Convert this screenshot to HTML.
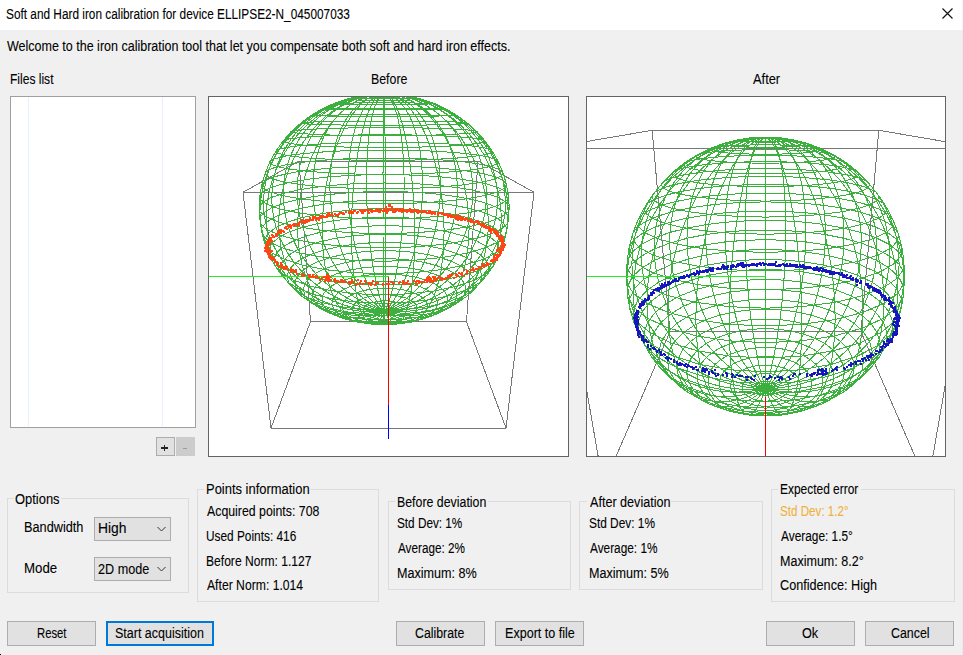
<!DOCTYPE html>
<html><head><meta charset="utf-8">
<style>
html,body{margin:0;padding:0;}
body{width:963px;height:655px;overflow:hidden;background:#f0f0f0;position:relative;font-family:"Liberation Sans",sans-serif;font-size:12px;color:#000;}
.t{position:absolute;white-space:nowrap;line-height:15px;font-size:14px;transform-origin:0 0;-webkit-text-stroke:0.1px currentColor;}
.abs{position:absolute;box-sizing:border-box;}
#titlebar{left:0;top:0;width:963px;height:30px;background:#fff;}
.close{left:942px;top:8px;width:11px;height:11px;}
.listbox{left:10px;top:96px;width:186px;height:332px;background:#fff;border:1px solid #a0a0a0;}
.group{border:1px solid #dcdcdc;}
.combo{background:#e1e1e1;border:1px solid #adadad;}
.btn{background:#e1e1e1;border:1px solid #adadad;}
</style></head><body>
<div id="titlebar" class="abs"></div>
<svg class="abs close" viewBox="0 0 11 11" width="11" height="11" style="position:absolute"><path d="M0.5 0.5L10.5 10.5M10.5 0.5L0.5 10.5" stroke="#111" stroke-width="1.15" fill="none"/></svg>
<div class="abs listbox"></div>
<div class="abs" style="left:28px;top:97px;width:1px;height:329px;background:#e8f0fb"></div>
<div class="abs" style="left:162px;top:97px;width:1px;height:329px;background:#e8f0fb"></div>
<div class="abs btn" style="left:156px;top:437px;width:19px;height:19px;"></div>
<div class="abs" style="left:176px;top:437px;width:19px;height:19px;background:#cccccc"></div>
<div class="abs" style="left:161px;top:447px;width:7px;height:2px;background:#222"></div>
<div class="abs" style="left:164px;top:445px;width:1px;height:6px;background:#222"></div>
<div class="abs" style="left:183px;top:448px;width:4px;height:1px;background:#9a9aa6"></div>
<svg width="361" height="361" viewBox="0 0 361 361" style="position:absolute;left:208px;top:96px" shape-rendering="crispEdges">
<defs><clipPath id="cp1"><rect x="1" y="1" width="359" height="359"/></clipPath></defs>
<rect x="0.5" y="0.5" width="360" height="360" fill="#fff" stroke="#646464"/>
<g clip-path="url(#cp1)" fill="none" stroke-width="1">
<path stroke="#787878" d="M102.5 225.7 L63.0 332.1 M102.5 225.7 L91.0 65.0 M102.5 225.7 L258.5 225.7 M63.0 332.1 L35.0 96.3 M63.0 332.1 L298.0 332.1 M91.0 65.0 L35.0 96.3 M91.0 65.0 L270.0 65.0 M35.0 96.3 L326.0 96.3 M258.5 225.7 L298.0 332.1 M258.5 225.7 L270.0 65.0 M298.0 332.1 L326.0 96.3 M270.0 65.0 L326.0 96.3"/>
<path stroke="#3cb03c" d="M176.7 219.7 L178.9 219.6 L181.0 219.4 L182.9 218.9 L184.6 218.3 L185.9 217.6 L186.9 216.8 L187.5 215.9 L187.7 215.0 L187.4 214.1 L186.8 213.2 L185.8 212.4 L184.4 211.7 L182.8 211.2 L181.0 210.7 L179.0 210.5 L176.9 210.4 L174.8 210.5 L172.8 210.7 L171.0 211.2 L169.3 211.7 L168.0 212.4 L166.9 213.2 L166.3 214.1 L166.0 215.0 L166.1 215.9 L166.7 216.8 L167.6 217.6 L169.0 218.3 L170.6 218.9 L172.5 219.4 L174.6 219.6 L176.7 219.7 M176.6 223.3 L181.1 223.1 L185.3 222.6 L189.2 221.6 L192.5 220.4 L195.2 218.9 L197.1 217.2 L198.2 215.5 L198.4 213.6 L197.9 211.9 L196.5 210.2 L194.4 208.6 L191.7 207.3 L188.5 206.3 L184.9 205.5 L181.0 205.0 L177.0 204.8 L172.9 205.0 L169.0 205.5 L165.4 206.3 L162.1 207.3 L159.4 208.6 L157.3 210.2 L155.9 211.9 L155.2 213.6 L155.4 215.5 L156.4 217.2 L158.3 218.9 L160.9 220.4 L164.2 221.6 L168.0 222.6 L172.2 223.1 L176.6 223.3 M176.5 226.1 L183.3 225.8 L189.7 224.9 L195.6 223.5 L200.6 221.6 L204.5 219.3 L207.3 216.8 L208.8 214.2 L209.0 211.5 L208.0 208.8 L205.9 206.4 L202.7 204.2 L198.7 202.3 L193.9 200.8 L188.6 199.7 L182.9 199.0 L177.1 198.7 L171.2 199.0 L165.4 199.7 L160.1 200.8 L155.3 202.3 L151.2 204.2 L147.9 206.4 L145.7 208.8 L144.6 211.5 L144.7 214.2 L146.1 216.8 L148.8 219.3 L152.7 221.6 L157.6 223.5 L163.4 224.9 L169.8 225.8 L176.5 226.1 M176.4 227.9 L185.6 227.5 L194.3 226.3 L202.1 224.4 L208.7 221.8 L213.9 218.8 L217.4 215.5 L219.3 212.0 L219.4 208.4 L217.9 205.0 L214.9 201.9 L210.7 199.1 L205.3 196.7 L199.0 194.7 L192.1 193.3 L184.7 192.5 L177.1 192.2 L169.5 192.5 L162.1 193.3 L155.1 194.7 L148.7 196.7 L143.3 199.1 L138.9 201.9 L135.8 205.0 L134.2 208.4 L134.2 212.0 L135.9 215.5 L139.3 218.8 L144.4 221.8 L150.9 224.4 L158.7 226.3 L167.3 227.5 L176.4 227.9 M176.3 228.8 L187.9 228.2 L198.9 226.7 L208.7 224.3 L216.9 221.1 L223.2 217.3 L227.5 213.1 L229.5 208.8 L229.4 204.6 L227.4 200.5 L223.6 196.7 L218.2 193.3 L211.5 190.5 L203.8 188.3 L195.4 186.6 L186.4 185.6 L177.2 185.3 L167.9 185.6 L158.9 186.6 L150.4 188.3 L142.6 190.5 L135.8 193.3 L130.3 196.7 L126.4 200.5 L124.2 204.6 L123.9 208.8 L125.8 213.1 L129.8 217.3 L136.0 221.1 L144.1 224.3 L153.9 226.7 L164.8 228.2 L176.3 228.8 M176.2 228.5 L190.2 227.8 L203.5 226.0 L215.3 223.0 L225.0 219.2 L232.4 214.7 L237.2 209.9 L239.4 204.8 L239.1 199.9 L236.4 195.2 L231.7 190.8 L225.2 187.1 L217.3 183.9 L208.3 181.3 L198.4 179.5 L187.9 178.4 L177.2 178.0 L166.5 178.4 L156.0 179.5 L146.0 181.3 L136.9 183.9 L128.8 187.1 L122.2 190.8 L117.3 195.2 L114.5 199.9 L113.9 204.8 L115.9 209.9 L120.5 214.7 L127.7 219.2 L137.4 223.0 L149.0 226.0 L162.2 227.8 L176.2 228.5 M176.1 227.0 L192.5 226.2 L208.0 224.1 L221.7 220.7 L233.0 216.2 L241.4 211.1 L246.7 205.6 L248.9 199.9 L248.2 194.4 L244.9 189.2 L239.3 184.4 L231.8 180.3 L222.7 176.8 L212.4 174.0 L201.2 172.1 L189.4 170.9 L177.3 170.5 L165.1 170.9 L153.3 172.1 L142.0 174.0 L131.5 176.8 L122.3 180.3 L114.6 184.4 L108.8 189.2 L105.3 194.4 L104.4 199.9 L106.4 205.6 L111.4 211.1 L119.6 216.2 L130.7 220.7 L144.3 224.1 L159.7 226.2 L176.1 227.0 M176.0 224.2 L194.8 223.3 L212.5 220.9 L228.1 217.1 L240.7 212.1 L250.0 206.4 L255.7 200.3 L257.9 194.1 L256.9 188.1 L252.9 182.5 L246.4 177.4 L237.9 173.0 L227.6 169.3 L216.1 166.4 L203.7 164.3 L190.7 163.1 L177.3 162.7 L163.9 163.1 L150.8 164.3 L138.3 166.4 L126.6 169.3 L116.3 173.0 L107.5 177.4 L100.8 182.5 L96.6 188.1 L95.3 194.1 L97.2 200.3 L102.7 206.4 L111.7 212.1 L124.2 217.1 L139.6 220.9 L157.2 223.3 L176.0 224.2 M175.8 220.0 L197.0 219.1 L216.8 216.4 L234.1 212.2 L248.1 206.8 L258.2 200.7 L264.2 194.1 L266.3 187.5 L264.8 181.1 L260.2 175.2 L252.9 169.9 L243.4 165.3 L232.1 161.5 L219.5 158.5 L206.0 156.4 L191.8 155.1 L177.3 154.7 L162.8 155.1 L148.6 156.4 L134.9 158.5 L122.2 161.5 L110.8 165.3 L101.1 169.9 L93.5 175.2 L88.6 181.1 L86.8 187.5 L88.6 194.1 L94.4 200.7 L104.2 206.8 L117.9 212.2 L135.0 216.4 L154.7 219.1 L175.8 220.0 M175.7 214.4 L199.0 213.4 L220.9 210.5 L239.8 206.1 L255.0 200.4 L265.8 193.9 L272.0 187.0 L274.0 180.1 L272.1 173.5 L266.8 167.4 L258.7 161.9 L248.3 157.3 L236.1 153.4 L222.5 150.4 L208.0 148.2 L192.8 146.9 L177.3 146.5 L161.8 146.9 L146.6 148.2 L132.0 150.4 L118.2 153.4 L105.9 157.3 L95.2 161.9 L86.8 167.4 L81.3 173.5 L79.0 180.1 L80.7 187.0 L86.6 193.9 L97.1 200.4 L112.0 206.1 L130.7 210.5 L152.4 213.4 L175.7 214.4 M175.6 207.3 L200.9 206.3 L224.6 203.3 L245.1 198.6 L261.3 192.7 L272.7 186.0 L279.1 178.9 L280.9 171.9 L278.6 165.2 L272.7 159.0 L263.9 153.5 L252.6 148.9 L239.6 145.0 L225.2 142.0 L209.7 139.9 L193.7 138.6 L177.3 138.2 L161.0 138.6 L144.9 139.9 L129.3 142.0 L114.8 145.0 L101.5 148.9 L90.1 153.5 L80.9 159.0 L74.7 165.2 L72.0 171.9 L73.5 178.9 L79.6 186.0 L90.6 192.7 L106.5 198.6 L126.8 203.3 L150.3 206.3 L175.6 207.3 M175.5 198.8 L202.7 197.8 L228.0 194.7 L249.7 190.0 L266.9 183.9 L278.7 177.1 L285.3 170.0 L287.0 163.0 L284.3 156.3 L277.8 150.2 L268.3 144.8 L256.4 140.2 L242.6 136.4 L227.4 133.5 L211.2 131.4 L194.5 130.1 L177.4 129.7 L160.2 130.1 L143.4 131.4 L127.1 133.5 L111.8 136.4 L97.8 140.2 L85.6 144.8 L75.8 150.2 L69.0 156.3 L65.9 163.0 L67.2 170.0 L73.4 177.1 L84.9 183.9 L101.7 190.0 L123.2 194.7 L148.3 197.8 L175.5 198.8 M175.4 188.9 L204.1 187.9 L230.8 184.8 L253.7 180.1 L271.6 174.1 L283.9 167.3 L290.6 160.3 L292.1 153.4 L289.0 146.9 L282.0 141.0 L272.0 135.7 L259.4 131.3 L245.0 127.6 L229.2 124.8 L212.5 122.8 L195.1 121.6 L177.4 121.2 L159.6 121.6 L142.2 122.8 L125.3 124.8 L109.3 127.6 L94.7 131.3 L81.9 135.7 L71.5 141.0 L64.2 146.9 L60.7 153.4 L61.8 160.3 L68.1 167.3 L80.0 174.1 L97.5 180.1 L120.1 184.8 L146.7 187.9 L175.4 188.9 M175.3 177.7 L205.3 176.7 L233.2 173.7 L257.0 169.0 L275.5 163.2 L288.1 156.7 L294.8 150.0 L296.1 143.3 L292.7 137.1 L285.4 131.4 L274.8 126.4 L261.8 122.2 L247.0 118.7 L230.7 116.1 L213.4 114.2 L195.5 113.0 L177.4 112.7 L159.1 113.0 L141.2 114.2 L123.8 116.1 L107.4 118.7 L92.2 122.2 L79.0 126.4 L68.1 131.4 L60.4 137.1 L56.6 143.3 L57.5 150.0 L63.8 156.7 L76.0 163.2 L94.1 169.0 L117.6 173.7 L145.3 176.7 L175.3 177.7 M175.2 165.3 L206.1 164.3 L234.8 161.4 L259.3 157.0 L278.2 151.5 L291.1 145.4 L297.8 139.0 L299.0 132.7 L295.4 126.8 L287.8 121.5 L276.9 116.9 L263.6 112.9 L248.3 109.7 L231.7 107.2 L214.1 105.5 L195.9 104.4 L177.3 104.1 L158.8 104.4 L140.5 105.5 L122.8 107.2 L106.0 109.7 L90.5 112.9 L76.9 116.9 L65.7 121.5 L57.7 126.8 L53.6 132.7 L54.4 139.0 L60.7 145.4 L73.1 151.5 L91.6 157.0 L115.8 161.4 L144.3 164.3 L175.2 165.3 M175.1 151.8 L206.6 150.9 L235.8 148.3 L260.7 144.2 L279.9 139.1 L292.8 133.4 L299.6 127.5 L300.7 121.8 L297.0 116.4 L289.2 111.5 L278.1 107.2 L264.6 103.6 L249.1 100.7 L232.3 98.4 L214.5 96.8 L196.0 95.8 L177.3 95.5 L158.6 95.8 L140.1 96.8 L122.1 98.4 L105.1 100.7 L89.4 103.6 L75.6 107.2 L64.2 111.5 L56.0 116.4 L51.8 121.8 L52.5 127.5 L58.8 133.4 L71.3 139.1 L90.1 144.2 L114.6 148.3 L143.6 150.9 L175.1 151.8 M175.0 137.6 L206.8 136.8 L236.1 134.4 L261.1 130.7 L280.4 126.1 L293.3 121.0 L300.1 115.7 L301.2 110.5 L297.4 105.7 L289.6 101.3 L278.5 97.5 L264.8 94.2 L249.3 91.6 L232.4 89.6 L214.6 88.1 L196.1 87.3 L177.3 87.0 L158.5 87.3 L139.9 88.1 L121.9 89.6 L104.8 91.6 L89.1 94.2 L75.2 97.5 L63.7 101.3 L55.5 105.7 L51.3 110.5 L51.9 115.7 L58.2 121.0 L70.7 126.1 L89.6 130.7 L114.3 134.4 L143.4 136.8 L175.0 137.6 M175.0 122.8 L206.5 122.1 L235.6 120.0 L260.4 116.8 L279.6 112.8 L292.5 108.4 L299.3 103.7 L300.4 99.2 L296.7 94.9 L288.9 91.1 L277.9 87.7 L264.4 84.9 L248.9 82.6 L232.1 80.8 L214.4 79.5 L196.0 78.8 L177.3 78.5 L158.5 78.8 L140.1 79.5 L122.2 80.8 L105.2 82.6 L89.5 84.9 L75.7 87.7 L64.3 91.1 L56.2 94.9 L52.0 99.2 L52.7 103.7 L59.0 108.4 L71.4 112.8 L90.2 116.8 L114.7 120.0 L143.6 122.1 L175.0 122.8 M175.0 107.8 L205.8 107.2 L234.3 105.5 L258.7 102.8 L277.6 99.4 L290.3 95.6 L297.1 91.7 L298.3 87.8 L294.8 84.2 L287.2 80.9 L276.4 78.1 L263.1 75.6 L247.9 73.6 L231.4 72.1 L213.8 71.0 L195.7 70.4 L177.2 70.2 L158.7 70.4 L140.5 71.0 L122.8 72.1 L106.1 73.6 L90.7 75.6 L77.1 78.1 L66.0 80.9 L58.0 84.2 L54.0 87.8 L54.8 91.7 L61.1 95.6 L73.4 99.4 L91.9 102.8 L115.9 105.5 L144.2 107.2 L175.0 107.8 M175.0 92.9 L204.7 92.4 L232.3 91.0 L255.9 88.8 L274.3 86.1 L286.8 83.0 L293.6 79.8 L294.9 76.6 L291.6 73.6 L284.4 70.9 L274.0 68.5 L261.1 66.5 L246.3 64.9 L230.2 63.6 L213.0 62.7 L195.3 62.1 L177.2 62.0 L159.1 62.1 L141.2 62.7 L124.0 63.6 L107.6 64.9 L92.6 66.5 L79.5 68.5 L68.7 70.9 L61.1 73.6 L57.4 76.6 L58.3 79.8 L64.6 83.0 L76.7 86.1 L94.6 88.8 L117.9 91.0 L145.3 92.4 L175.0 92.9 M175.0 78.4 L203.3 78.0 L229.6 76.9 L252.2 75.2 L269.8 73.1 L282.0 70.6 L288.7 68.1 L290.2 65.6 L287.3 63.3 L280.5 61.1 L270.6 59.2 L258.3 57.6 L244.0 56.3 L228.4 55.3 L211.9 54.5 L194.7 54.1 L177.1 54.0 L159.6 54.1 L142.3 54.5 L125.6 55.3 L109.8 56.3 L95.4 57.6 L82.8 59.2 L72.5 61.1 L65.4 63.3 L62.0 65.6 L63.1 68.1 L69.4 70.6 L81.1 73.1 L98.4 75.2 L120.7 76.9 L146.8 78.0 L175.0 78.4 M175.1 64.5 L201.5 64.2 L226.2 63.4 L247.5 62.2 L264.3 60.6 L276.0 58.8 L282.5 56.9 L284.3 55.1 L281.7 53.3 L275.5 51.7 L266.2 50.2 L254.6 49.0 L241.1 48.0 L226.2 47.2 L210.4 46.6 L193.9 46.3 L177.1 46.2 L160.2 46.3 L143.7 46.6 L127.7 47.2 L112.6 48.0 L98.9 49.0 L87.0 50.2 L77.5 51.7 L70.9 53.3 L67.9 55.1 L69.2 56.9 L75.4 58.8 L86.7 60.6 L103.1 62.2 L124.1 63.4 L148.6 64.2 L175.1 64.5 M175.1 51.6 L199.5 51.4 L222.2 50.8 L242.0 50.0 L257.7 48.9 L268.8 47.6 L275.2 46.3 L277.1 45.0 L275.0 43.8 L269.4 42.6 L260.9 41.6 L250.1 40.8 L237.5 40.0 L223.5 39.5 L208.5 39.1 L192.9 38.8 L177.0 38.7 L161.0 38.8 L145.4 39.1 L130.3 39.5 L116.1 40.0 L103.3 40.8 L92.2 41.6 L83.4 42.6 L77.5 43.8 L75.0 45.0 L76.6 46.3 L82.6 47.6 L93.4 48.9 L108.7 50.0 L128.2 50.8 L150.8 51.4 L175.1 51.6 M175.2 39.8 L197.2 39.6 L217.8 39.3 L235.7 38.8 L250.2 38.1 L260.5 37.3 L266.7 36.5 L268.8 35.7 L267.2 34.9 L262.3 34.2 L254.7 33.5 L244.9 33.0 L233.2 32.5 L220.3 32.1 L206.4 31.9 L191.8 31.7 L176.9 31.7 L162.0 31.7 L147.4 31.9 L133.4 32.1 L120.2 32.5 L108.4 33.0 L98.3 33.5 L90.5 34.2 L85.3 34.9 L83.3 35.7 L85.1 36.5 L90.9 37.3 L100.9 38.1 L115.1 38.8 L132.8 39.3 L153.3 39.6 L175.2 39.8 M175.3 29.3 L194.7 29.2 L212.9 29.1 L228.9 28.8 L241.9 28.4 L251.4 28.0 L257.2 27.6 L259.5 27.2 L258.3 26.8 L254.2 26.4 L247.5 26.0 L238.8 25.7 L228.3 25.4 L216.5 25.2 L203.8 25.1 L190.5 25.0 L176.8 25.0 L163.2 25.0 L149.8 25.1 L137.0 25.2 L125.1 25.4 L114.4 25.7 L105.4 26.0 L98.5 26.4 L94.1 26.8 L92.6 27.2 L94.5 27.6 L100.0 28.0 L109.2 28.4 L122.0 28.8 L137.8 29.1 L155.9 29.2 L175.3 29.3 M175.4 20.3 L192.0 20.2 L207.8 20.2 L221.7 20.1 L233.1 20.0 L241.6 19.9 L246.9 19.7 L249.2 19.6 L248.5 19.4 L245.1 19.3 L239.5 19.2 L231.9 19.1 L222.7 19.0 L212.2 18.9 L200.9 18.9 L189.0 18.8 L176.8 18.8 L164.5 18.8 L152.5 18.9 L141.1 18.9 L130.5 19.0 L121.2 19.1 L113.4 19.2 L107.5 19.3 L103.9 19.4 L102.9 19.6 L104.9 19.7 L109.9 19.9 L118.2 20.0 L129.4 20.1 L143.1 20.2 L158.7 20.2 L175.4 20.3 M175.5 12.8 L189.3 12.8 L202.4 12.8 L214.1 12.8 L223.8 12.9 L231.2 12.9 L235.9 12.9 L238.1 13.0 L237.8 13.0 L235.2 13.1 L230.6 13.1 L224.2 13.2 L216.4 13.2 L207.4 13.2 L197.6 13.3 L187.3 13.3 L176.7 13.3 L166.0 13.3 L155.6 13.3 L145.7 13.2 L136.7 13.2 L128.7 13.2 L122.1 13.1 L117.3 13.1 L114.5 13.0 L114.0 13.0 L115.9 12.9 L120.5 12.9 L127.6 12.9 L137.1 12.8 L148.7 12.8 L161.7 12.8 L175.5 12.8 M175.6 6.8 L186.6 6.8 L197.0 6.9 L206.4 7.0 L214.3 7.1 L220.3 7.2 L224.4 7.4 L226.4 7.5 L226.4 7.7 L224.5 7.8 L220.9 8.0 L215.8 8.1 L209.5 8.2 L202.1 8.3 L194.0 8.4 L185.4 8.4 L176.6 8.4 L167.7 8.4 L159.0 8.4 L150.9 8.3 L143.4 8.2 L137.0 8.1 L131.7 8.0 L127.9 7.8 L125.9 7.7 L125.7 7.5 L127.5 7.4 L131.4 7.2 L137.3 7.1 L145.0 7.0 L154.3 6.9 L164.6 6.8 L175.6 6.8 M175.7 2.4 L183.9 2.4 L191.6 2.5 L198.6 2.6 L204.6 2.7 L209.2 2.9 L212.5 3.1 L214.2 3.3 L214.4 3.4 L213.1 3.6 L210.5 3.8 L206.7 3.9 L201.9 4.1 L196.3 4.2 L190.0 4.3 L183.4 4.3 L176.5 4.3 L169.5 4.3 L162.8 4.3 L156.5 4.2 L150.8 4.1 L145.9 3.9 L142.0 3.8 L139.3 3.6 L137.9 3.4 L137.9 3.3 L139.5 3.1 L142.6 2.9 L147.1 2.7 L153.0 2.6 L159.9 2.5 L167.6 2.4 L175.7 2.4 M175.9 -0.5 L181.2 -0.5 L186.3 -0.4 L190.9 -0.4 L194.9 -0.2 L198.1 -0.1 L200.3 0.0 L201.6 0.2 L201.9 0.4 L201.2 0.5 L199.5 0.7 L197.0 0.8 L193.8 0.9 L190.0 1.0 L185.7 1.1 L181.1 1.1 L176.3 1.1 L171.6 1.1 L166.9 1.1 L162.6 1.0 L158.7 0.9 L155.5 0.8 L152.9 0.7 L151.2 0.5 L150.3 0.4 L150.5 0.2 L151.7 0.0 L153.9 -0.1 L157.0 -0.2 L160.9 -0.4 L165.5 -0.4 L170.5 -0.5 L175.9 -0.5 M176.0 -2.0 L178.6 -2.0 L181.1 -2.0 L183.4 -1.9 L185.4 -1.8 L187.0 -1.8 L188.2 -1.7 L188.9 -1.6 L189.1 -1.5 L188.8 -1.4 L188.0 -1.3 L186.8 -1.3 L185.2 -1.2 L183.2 -1.1 L181.1 -1.1 L178.7 -1.1 L176.2 -1.1 L173.8 -1.1 L171.4 -1.1 L169.2 -1.1 L167.2 -1.2 L165.6 -1.3 L164.3 -1.3 L163.5 -1.4 L163.1 -1.5 L163.3 -1.6 L164.0 -1.7 L165.1 -1.8 L166.7 -1.8 L168.6 -1.9 L170.9 -2.0 L173.4 -2.0 L176.0 -2.0 M176.8 215.4 L176.7 219.7 L176.6 223.3 L176.5 226.1 L176.4 227.9 L176.3 228.8 L176.2 228.5 L176.1 227.0 L176.0 224.2 L175.8 220.0 L175.7 214.4 L175.6 207.3 L175.5 198.8 L175.4 188.9 L175.3 177.7 L175.2 165.3 L175.1 151.8 L175.0 137.6 L175.0 122.8 L175.0 107.8 L175.0 92.9 L175.0 78.4 L175.1 64.5 L175.1 51.6 L175.2 39.8 L175.3 29.3 L175.4 20.3 L175.5 12.8 L175.6 6.8 L175.7 2.4 L175.9 -0.5 L176.0 -2.0 L176.1 -2.1 M176.8 215.4 L178.9 219.6 L181.1 223.1 L183.3 225.8 L185.6 227.5 L187.9 228.2 L190.2 227.8 L192.5 226.2 L194.8 223.3 L197.0 219.1 L199.0 213.4 L200.9 206.3 L202.7 197.8 L204.1 187.9 L205.3 176.7 L206.1 164.3 L206.6 150.9 L206.8 136.8 L206.5 122.1 L205.8 107.2 L204.7 92.4 L203.3 78.0 L201.5 64.2 L199.5 51.4 L197.2 39.6 L194.7 29.2 L192.0 20.2 L189.3 12.8 L186.6 6.8 L183.9 2.4 L181.2 -0.5 L178.6 -2.0 L176.1 -2.1 M176.8 215.4 L181.0 219.4 L185.3 222.6 L189.7 224.9 L194.3 226.3 L198.9 226.7 L203.5 226.0 L208.0 224.1 L212.5 220.9 L216.8 216.4 L220.9 210.5 L224.6 203.3 L228.0 194.7 L230.8 184.8 L233.2 173.7 L234.8 161.4 L235.8 148.3 L236.1 134.4 L235.6 120.0 L234.3 105.5 L232.3 91.0 L229.6 76.9 L226.2 63.4 L222.2 50.8 L217.8 39.3 L212.9 29.1 L207.8 20.2 L202.4 12.8 L197.0 6.9 L191.6 2.5 L186.3 -0.4 L181.1 -2.0 L176.1 -2.1 M176.8 215.4 L182.9 218.9 L189.2 221.6 L195.6 223.5 L202.1 224.4 L208.7 224.3 L215.3 223.0 L221.7 220.7 L228.1 217.1 L234.1 212.2 L239.8 206.1 L245.1 198.6 L249.7 190.0 L253.7 180.1 L257.0 169.0 L259.3 157.0 L260.7 144.2 L261.1 130.7 L260.4 116.8 L258.7 102.8 L255.9 88.8 L252.2 75.2 L247.5 62.2 L242.0 50.0 L235.7 38.8 L228.9 28.8 L221.7 20.1 L214.1 12.8 L206.4 7.0 L198.6 2.6 L190.9 -0.4 L183.4 -1.9 L176.1 -2.1 M176.8 215.4 L184.6 218.3 L192.5 220.4 L200.6 221.6 L208.7 221.8 L216.9 221.1 L225.0 219.2 L233.0 216.2 L240.7 212.1 L248.1 206.8 L255.0 200.4 L261.3 192.7 L266.9 183.9 L271.6 174.1 L275.5 163.2 L278.2 151.5 L279.9 139.1 L280.4 126.1 L279.6 112.8 L277.6 99.4 L274.3 86.1 L269.8 73.1 L264.3 60.6 L257.7 48.9 L250.2 38.1 L241.9 28.4 L233.1 20.0 L223.8 12.9 L214.3 7.1 L204.6 2.7 L194.9 -0.2 L185.4 -1.8 L176.1 -2.1 M176.8 215.4 L185.9 217.6 L195.2 218.9 L204.5 219.3 L213.9 218.8 L223.2 217.3 L232.4 214.7 L241.4 211.1 L250.0 206.4 L258.2 200.7 L265.8 193.9 L272.7 186.0 L278.7 177.1 L283.9 167.3 L288.1 156.7 L291.1 145.4 L292.8 133.4 L293.3 121.0 L292.5 108.4 L290.3 95.6 L286.8 83.0 L282.0 70.6 L276.0 58.8 L268.8 47.6 L260.5 37.3 L251.4 28.0 L241.6 19.9 L231.2 12.9 L220.3 7.2 L209.2 2.9 L198.1 -0.1 L187.0 -1.8 L176.1 -2.1 M176.8 215.4 L186.9 216.8 L197.1 217.2 L207.3 216.8 L217.4 215.5 L227.5 213.1 L237.2 209.9 L246.7 205.6 L255.7 200.3 L264.2 194.1 L272.0 187.0 L279.1 178.9 L285.3 170.0 L290.6 160.3 L294.8 150.0 L297.8 139.0 L299.6 127.5 L300.1 115.7 L299.3 103.7 L297.1 91.7 L293.6 79.8 L288.7 68.1 L282.5 56.9 L275.2 46.3 L266.7 36.5 L257.2 27.6 L246.9 19.7 L235.9 12.9 L224.4 7.4 L212.5 3.1 L200.3 0.0 L188.2 -1.7 L176.1 -2.1 M176.8 215.4 L187.5 215.9 L198.2 215.5 L208.8 214.2 L219.3 212.0 L229.5 208.8 L239.4 204.8 L248.9 199.9 L257.9 194.1 L266.3 187.5 L274.0 180.1 L280.9 171.9 L287.0 163.0 L292.1 153.4 L296.1 143.3 L299.0 132.7 L300.7 121.8 L301.2 110.5 L300.4 99.2 L298.3 87.8 L294.9 76.6 L290.2 65.6 L284.3 55.1 L277.1 45.0 L268.8 35.7 L259.5 27.2 L249.2 19.6 L238.1 13.0 L226.4 7.5 L214.2 3.3 L201.6 0.2 L188.9 -1.6 L176.1 -2.1 M176.8 215.4 L187.7 215.0 L198.4 213.6 L209.0 211.5 L219.4 208.4 L229.4 204.6 L239.1 199.9 L248.2 194.4 L256.9 188.1 L264.8 181.1 L272.1 173.5 L278.6 165.2 L284.3 156.3 L289.0 146.9 L292.7 137.1 L295.4 126.8 L297.0 116.4 L297.4 105.7 L296.7 94.9 L294.8 84.2 L291.6 73.6 L287.3 63.3 L281.7 53.3 L275.0 43.8 L267.2 34.9 L258.3 26.8 L248.5 19.4 L237.8 13.0 L226.4 7.7 L214.4 3.4 L201.9 0.4 L189.1 -1.5 L176.1 -2.1 M176.8 215.4 L187.4 214.1 L197.9 211.9 L208.0 208.8 L217.9 205.0 L227.4 200.5 L236.4 195.2 L244.9 189.2 L252.9 182.5 L260.2 175.2 L266.8 167.4 L272.7 159.0 L277.8 150.2 L282.0 141.0 L285.4 131.4 L287.8 121.5 L289.2 111.5 L289.6 101.3 L288.9 91.1 L287.2 80.9 L284.4 70.9 L280.5 61.1 L275.5 51.7 L269.4 42.6 L262.3 34.2 L254.2 26.4 L245.1 19.3 L235.2 13.1 L224.5 7.8 L213.1 3.6 L201.2 0.5 L188.8 -1.4 L176.1 -2.1 M176.8 215.4 L186.8 213.2 L196.5 210.2 L205.9 206.4 L214.9 201.9 L223.6 196.7 L231.7 190.8 L239.3 184.4 L246.4 177.4 L252.9 169.9 L258.7 161.9 L263.9 153.5 L268.3 144.8 L272.0 135.7 L274.8 126.4 L276.9 116.9 L278.1 107.2 L278.5 97.5 L277.9 87.7 L276.4 78.1 L274.0 68.5 L270.6 59.2 L266.2 50.2 L260.9 41.6 L254.7 33.5 L247.5 26.0 L239.5 19.2 L230.6 13.1 L220.9 8.0 L210.5 3.8 L199.5 0.7 L188.0 -1.3 L176.1 -2.1 M176.8 215.4 L185.8 212.4 L194.4 208.6 L202.7 204.2 L210.7 199.1 L218.2 193.3 L225.2 187.1 L231.8 180.3 L237.9 173.0 L243.4 165.3 L248.3 157.3 L252.6 148.9 L256.4 140.2 L259.4 131.3 L261.8 122.2 L263.6 112.9 L264.6 103.6 L264.8 94.2 L264.4 84.9 L263.1 75.6 L261.1 66.5 L258.3 57.6 L254.6 49.0 L250.1 40.8 L244.9 33.0 L238.8 25.7 L231.9 19.1 L224.2 13.2 L215.8 8.1 L206.7 3.9 L197.0 0.8 L186.8 -1.3 L176.1 -2.1 M176.8 215.4 L184.4 211.7 L191.7 207.3 L198.7 202.3 L205.3 196.7 L211.5 190.5 L217.3 183.9 L222.7 176.8 L227.6 169.3 L232.1 161.5 L236.1 153.4 L239.6 145.0 L242.6 136.4 L245.0 127.6 L247.0 118.7 L248.3 109.7 L249.1 100.7 L249.3 91.6 L248.9 82.6 L247.9 73.6 L246.3 64.9 L244.0 56.3 L241.1 48.0 L237.5 40.0 L233.2 32.5 L228.3 25.4 L222.7 19.0 L216.4 13.2 L209.5 8.2 L201.9 4.1 L193.8 0.9 L185.2 -1.2 L176.1 -2.1 M176.8 215.4 L182.8 211.2 L188.5 206.3 L193.9 200.8 L199.0 194.7 L203.8 188.3 L208.3 181.3 L212.4 174.0 L216.1 166.4 L219.5 158.5 L222.5 150.4 L225.2 142.0 L227.4 133.5 L229.2 124.8 L230.7 116.1 L231.7 107.2 L232.3 98.4 L232.4 89.6 L232.1 80.8 L231.4 72.1 L230.2 63.6 L228.4 55.3 L226.2 47.2 L223.5 39.5 L220.3 32.1 L216.5 25.2 L212.2 18.9 L207.4 13.2 L202.1 8.3 L196.3 4.2 L190.0 1.0 L183.2 -1.1 L176.1 -2.1 M176.8 215.4 L181.0 210.7 L184.9 205.5 L188.6 199.7 L192.1 193.3 L195.4 186.6 L198.4 179.5 L201.2 172.1 L203.7 164.3 L206.0 156.4 L208.0 148.2 L209.7 139.9 L211.2 131.4 L212.5 122.8 L213.4 114.2 L214.1 105.5 L214.5 96.8 L214.6 88.1 L214.4 79.5 L213.8 71.0 L213.0 62.7 L211.9 54.5 L210.4 46.6 L208.5 39.1 L206.4 31.9 L203.8 25.1 L200.9 18.9 L197.6 13.3 L194.0 8.4 L190.0 4.3 L185.7 1.1 L181.1 -1.1 L176.1 -2.1 M176.8 215.4 L179.0 210.5 L181.0 205.0 L182.9 199.0 L184.7 192.5 L186.4 185.6 L187.9 178.4 L189.4 170.9 L190.7 163.1 L191.8 155.1 L192.8 146.9 L193.7 138.6 L194.5 130.1 L195.1 121.6 L195.5 113.0 L195.9 104.4 L196.0 95.8 L196.1 87.3 L196.0 78.8 L195.7 70.4 L195.3 62.1 L194.7 54.1 L193.9 46.3 L192.9 38.8 L191.8 31.7 L190.5 25.0 L189.0 18.8 L187.3 13.3 L185.4 8.4 L183.4 4.3 L181.1 1.1 L178.7 -1.1 L176.1 -2.1 M176.8 215.4 L176.9 210.4 L177.0 204.8 L177.1 198.7 L177.1 192.2 L177.2 185.3 L177.2 178.0 L177.3 170.5 L177.3 162.7 L177.3 154.7 L177.3 146.5 L177.3 138.2 L177.4 129.7 L177.4 121.2 L177.4 112.7 L177.3 104.1 L177.3 95.5 L177.3 87.0 L177.3 78.5 L177.2 70.2 L177.2 62.0 L177.1 54.0 L177.1 46.2 L177.0 38.7 L176.9 31.7 L176.8 25.0 L176.8 18.8 L176.7 13.3 L176.6 8.4 L176.5 4.3 L176.3 1.1 L176.2 -1.1 L176.1 -2.1 M176.8 215.4 L174.8 210.5 L172.9 205.0 L171.2 199.0 L169.5 192.5 L167.9 185.6 L166.5 178.4 L165.1 170.9 L163.9 163.1 L162.8 155.1 L161.8 146.9 L161.0 138.6 L160.2 130.1 L159.6 121.6 L159.1 113.0 L158.8 104.4 L158.6 95.8 L158.5 87.3 L158.5 78.8 L158.7 70.4 L159.1 62.1 L159.6 54.1 L160.2 46.3 L161.0 38.8 L162.0 31.7 L163.2 25.0 L164.5 18.8 L166.0 13.3 L167.7 8.4 L169.5 4.3 L171.6 1.1 L173.8 -1.1 L176.1 -2.1 M176.8 215.4 L172.8 210.7 L169.0 205.5 L165.4 199.7 L162.1 193.3 L158.9 186.6 L156.0 179.5 L153.3 172.1 L150.8 164.3 L148.6 156.4 L146.6 148.2 L144.9 139.9 L143.4 131.4 L142.2 122.8 L141.2 114.2 L140.5 105.5 L140.1 96.8 L139.9 88.1 L140.1 79.5 L140.5 71.0 L141.2 62.7 L142.3 54.5 L143.7 46.6 L145.4 39.1 L147.4 31.9 L149.8 25.1 L152.5 18.9 L155.6 13.3 L159.0 8.4 L162.8 4.3 L166.9 1.1 L171.4 -1.1 L176.1 -2.1 M176.8 215.4 L171.0 211.2 L165.4 206.3 L160.1 200.8 L155.1 194.7 L150.4 188.3 L146.0 181.3 L142.0 174.0 L138.3 166.4 L134.9 158.5 L132.0 150.4 L129.3 142.0 L127.1 133.5 L125.3 124.8 L123.8 116.1 L122.8 107.2 L122.1 98.4 L121.9 89.6 L122.2 80.8 L122.8 72.1 L124.0 63.6 L125.6 55.3 L127.7 47.2 L130.3 39.5 L133.4 32.1 L137.0 25.2 L141.1 18.9 L145.7 13.2 L150.9 8.3 L156.5 4.2 L162.6 1.0 L169.2 -1.1 L176.1 -2.1 M176.8 215.4 L169.3 211.7 L162.1 207.3 L155.3 202.3 L148.7 196.7 L142.6 190.5 L136.9 183.9 L131.5 176.8 L126.6 169.3 L122.2 161.5 L118.2 153.4 L114.8 145.0 L111.8 136.4 L109.3 127.6 L107.4 118.7 L106.0 109.7 L105.1 100.7 L104.8 91.6 L105.2 82.6 L106.1 73.6 L107.6 64.9 L109.8 56.3 L112.6 48.0 L116.1 40.0 L120.2 32.5 L125.1 25.4 L130.5 19.0 L136.7 13.2 L143.4 8.2 L150.8 4.1 L158.7 0.9 L167.2 -1.2 L176.1 -2.1 M176.8 215.4 L168.0 212.4 L159.4 208.6 L151.2 204.2 L143.3 199.1 L135.8 193.3 L128.8 187.1 L122.3 180.3 L116.3 173.0 L110.8 165.3 L105.9 157.3 L101.5 148.9 L97.8 140.2 L94.7 131.3 L92.2 122.2 L90.5 112.9 L89.4 103.6 L89.1 94.2 L89.5 84.9 L90.7 75.6 L92.6 66.5 L95.4 57.6 L98.9 49.0 L103.3 40.8 L108.4 33.0 L114.4 25.7 L121.2 19.1 L128.7 13.2 L137.0 8.1 L145.9 3.9 L155.5 0.8 L165.6 -1.3 L176.1 -2.1 M176.8 215.4 L166.9 213.2 L157.3 210.2 L147.9 206.4 L138.9 201.9 L130.3 196.7 L122.2 190.8 L114.6 184.4 L107.5 177.4 L101.1 169.9 L95.2 161.9 L90.1 153.5 L85.6 144.8 L81.9 135.7 L79.0 126.4 L76.9 116.9 L75.6 107.2 L75.2 97.5 L75.7 87.7 L77.1 78.1 L79.5 68.5 L82.8 59.2 L87.0 50.2 L92.2 41.6 L98.3 33.5 L105.4 26.0 L113.4 19.2 L122.1 13.1 L131.7 8.0 L142.0 3.8 L152.9 0.7 L164.3 -1.3 L176.1 -2.1 M176.8 215.4 L166.3 214.1 L155.9 211.9 L145.7 208.8 L135.8 205.0 L126.4 200.5 L117.3 195.2 L108.8 189.2 L100.8 182.5 L93.5 175.2 L86.8 167.4 L80.9 159.0 L75.8 150.2 L71.5 141.0 L68.1 131.4 L65.7 121.5 L64.2 111.5 L63.7 101.3 L64.3 91.1 L66.0 80.9 L68.7 70.9 L72.5 61.1 L77.5 51.7 L83.4 42.6 L90.5 34.2 L98.5 26.4 L107.5 19.3 L117.3 13.1 L127.9 7.8 L139.3 3.6 L151.2 0.5 L163.5 -1.4 L176.1 -2.1 M176.8 215.4 L166.0 215.0 L155.2 213.6 L144.6 211.5 L134.2 208.4 L124.2 204.6 L114.5 199.9 L105.3 194.4 L96.6 188.1 L88.6 181.1 L81.3 173.5 L74.7 165.2 L69.0 156.3 L64.2 146.9 L60.4 137.1 L57.7 126.8 L56.0 116.4 L55.5 105.7 L56.2 94.9 L58.0 84.2 L61.1 73.6 L65.4 63.3 L70.9 53.3 L77.5 43.8 L85.3 34.9 L94.1 26.8 L103.9 19.4 L114.5 13.0 L125.9 7.7 L137.9 3.4 L150.3 0.4 L163.1 -1.5 L176.1 -2.1 M176.8 215.4 L166.1 215.9 L155.4 215.5 L144.7 214.2 L134.2 212.0 L123.9 208.8 L113.9 204.8 L104.4 199.9 L95.3 194.1 L86.8 187.5 L79.0 180.1 L72.0 171.9 L65.9 163.0 L60.7 153.4 L56.6 143.3 L53.6 132.7 L51.8 121.8 L51.3 110.5 L52.0 99.2 L54.0 87.8 L57.4 76.6 L62.0 65.6 L67.9 55.1 L75.0 45.0 L83.3 35.7 L92.6 27.2 L102.9 19.6 L114.0 13.0 L125.7 7.5 L137.9 3.3 L150.5 0.2 L163.3 -1.6 L176.1 -2.1 M176.8 215.4 L166.7 216.8 L156.4 217.2 L146.1 216.8 L135.9 215.5 L125.8 213.1 L115.9 209.9 L106.4 205.6 L97.2 200.3 L88.6 194.1 L80.7 187.0 L73.5 178.9 L67.2 170.0 L61.8 160.3 L57.5 150.0 L54.4 139.0 L52.5 127.5 L51.9 115.7 L52.7 103.7 L54.8 91.7 L58.3 79.8 L63.1 68.1 L69.2 56.9 L76.6 46.3 L85.1 36.5 L94.5 27.6 L104.9 19.7 L115.9 12.9 L127.5 7.4 L139.5 3.1 L151.7 0.0 L164.0 -1.7 L176.1 -2.1 M176.8 215.4 L167.6 217.6 L158.3 218.9 L148.8 219.3 L139.3 218.8 L129.8 217.3 L120.5 214.7 L111.4 211.1 L102.7 206.4 L94.4 200.7 L86.6 193.9 L79.6 186.0 L73.4 177.1 L68.1 167.3 L63.8 156.7 L60.7 145.4 L58.8 133.4 L58.2 121.0 L59.0 108.4 L61.1 95.6 L64.6 83.0 L69.4 70.6 L75.4 58.8 L82.6 47.6 L90.9 37.3 L100.0 28.0 L109.9 19.9 L120.5 12.9 L131.4 7.2 L142.6 2.9 L153.9 -0.1 L165.1 -1.8 L176.1 -2.1 M176.8 215.4 L169.0 218.3 L160.9 220.4 L152.7 221.6 L144.4 221.8 L136.0 221.1 L127.7 219.2 L119.6 216.2 L111.7 212.1 L104.2 206.8 L97.1 200.4 L90.6 192.7 L84.9 183.9 L80.0 174.1 L76.0 163.2 L73.1 151.5 L71.3 139.1 L70.7 126.1 L71.4 112.8 L73.4 99.4 L76.7 86.1 L81.1 73.1 L86.7 60.6 L93.4 48.9 L100.9 38.1 L109.2 28.4 L118.2 20.0 L127.6 12.9 L137.3 7.1 L147.1 2.7 L157.0 -0.2 L166.7 -1.8 L176.1 -2.1 M176.8 215.4 L170.6 218.9 L164.2 221.6 L157.6 223.5 L150.9 224.4 L144.1 224.3 L137.4 223.0 L130.7 220.7 L124.2 217.1 L117.9 212.2 L112.0 206.1 L106.5 198.6 L101.7 190.0 L97.5 180.1 L94.1 169.0 L91.6 157.0 L90.1 144.2 L89.6 130.7 L90.2 116.8 L91.9 102.8 L94.6 88.8 L98.4 75.2 L103.1 62.2 L108.7 50.0 L115.1 38.8 L122.0 28.8 L129.4 20.1 L137.1 12.8 L145.0 7.0 L153.0 2.6 L160.9 -0.4 L168.6 -1.9 L176.1 -2.1 M176.8 215.4 L172.5 219.4 L168.0 222.6 L163.4 224.9 L158.7 226.3 L153.9 226.7 L149.0 226.0 L144.3 224.1 L139.6 220.9 L135.0 216.4 L130.7 210.5 L126.8 203.3 L123.2 194.7 L120.1 184.8 L117.6 173.7 L115.8 161.4 L114.6 148.3 L114.3 134.4 L114.7 120.0 L115.9 105.5 L117.9 91.0 L120.7 76.9 L124.1 63.4 L128.2 50.8 L132.8 39.3 L137.8 29.1 L143.1 20.2 L148.7 12.8 L154.3 6.9 L159.9 2.5 L165.5 -0.4 L170.9 -2.0 L176.1 -2.1 M176.8 215.4 L174.6 219.6 L172.2 223.1 L169.8 225.8 L167.3 227.5 L164.8 228.2 L162.2 227.8 L159.7 226.2 L157.2 223.3 L154.7 219.1 L152.4 213.4 L150.3 206.3 L148.3 197.8 L146.7 187.9 L145.3 176.7 L144.3 164.3 L143.6 150.9 L143.4 136.8 L143.6 122.1 L144.2 107.2 L145.3 92.4 L146.8 78.0 L148.6 64.2 L150.8 51.4 L153.3 39.6 L155.9 29.2 L158.7 20.2 L161.7 12.8 L164.6 6.8 L167.6 2.4 L170.5 -0.5 L173.4 -2.0 L176.1 -2.1"/>
<path stroke="#0000ff" d="M180.5 180.5 L180.5 343.3"/>
<path stroke="#ff0000" d="M180.5 180.5 L180.5 308.9"/>
<path stroke="#22ee22" d="M180.5 180.5 L-22.7 180.5"/>
</g>
<path clip-path="url(#cp1)" fill="#ff4514" d="M170 114h2v2h-2zM129 184h2v2h-2zM282 164h2v2h-2zM128 184h2v2h-2zM274 127h2v2h-2zM221 115h2v2h-2zM62 162h2v2h-2zM229 116h2v2h-2zM149 115h2v2h-2zM201 187h2v2h-2zM61 144h2v2h-2zM155 114h2v2h-2zM267 125h2v2h-2zM59 152h2v2h-2zM277 129h2v2h-2zM204 115h2v2h-2zM277 168h2v2h-2zM231 116h2v2h-2zM293 150h2v2h-2zM288 139h2v2h-2zM62 144h2v2h-2zM285 134h2v2h-2zM186 114h2v2h-2zM68 138h2v2h-2zM153 115h2v2h-2zM285 135h2v2h-2zM286 158h2v2h-2zM147 188h2v2h-2zM168 112h2v2h-2zM269 172h2v2h-2zM109 122h2v2h-2zM114 119h2v2h-2zM103 180h2v2h-2zM212 185h2v2h-2zM161 113h2v2h-2zM201 112h2v2h-2zM232 181h2v2h-2zM100 124h2v2h-2zM288 139h2v2h-2zM172 113h2v2h-2zM171 113h2v2h-2zM62 142h2v2h-2zM284 164h2v2h-2zM59 157h2v2h-2zM82 131h2v2h-2zM57 150h2v2h-2zM293 153h2v2h-2zM59 154h2v2h-2zM292 153h2v2h-2zM68 168h2v2h-2zM79 173h2v2h-2zM193 115h2v2h-2zM182 185h2v2h-2zM98 125h2v2h-2zM282 134h2v2h-2zM294 149h2v2h-2zM101 123h2v2h-2zM58 155h2v2h-2zM141 186h2v2h-2zM284 163h2v2h-2zM187 114h2v2h-2zM221 116h2v2h-2zM126 117h2v2h-2zM198 186h2v2h-2zM85 127h2v2h-2zM104 180h2v2h-2zM91 125h2v2h-2zM292 139h2v2h-2zM62 161h2v2h-2zM288 159h2v2h-2zM246 119h2v2h-2zM272 128h2v2h-2zM235 117h2v2h-2zM288 136h2v2h-2zM222 116h2v2h-2zM262 173h2v2h-2zM104 123h2v2h-2zM244 119h2v2h-2zM94 124h2v2h-2zM216 115h2v2h-2zM73 171h2v2h-2zM104 121h2v2h-2zM152 114h2v2h-2zM294 152h2v2h-2zM292 141h2v2h-2zM241 180h2v2h-2zM289 137h2v2h-2zM61 147h2v2h-2zM76 131h2v2h-2zM275 169h2v2h-2zM246 119h2v2h-2zM222 116h2v2h-2zM90 128h2v2h-2zM202 114h2v2h-2zM128 118h2v2h-2zM68 139h2v2h-2zM251 121h2v2h-2zM207 113h2v2h-2zM264 171h2v2h-2zM295 149h2v2h-2zM273 129h2v2h-2zM134 117h2v2h-2zM149 187h2v2h-2zM58 148h2v2h-2zM58 153h2v2h-2zM61 144h2v2h-2zM122 118h2v2h-2zM104 178h2v2h-2zM79 129h2v2h-2zM177 113h2v2h-2zM184 115h2v2h-2zM296 148h2v2h-2zM174 114h2v2h-2zM59 150h2v2h-2zM280 130h2v2h-2zM59 148h2v2h-2zM162 114h2v2h-2zM284 165h2v2h-2zM233 117h2v2h-2zM280 131h2v2h-2zM273 169h2v2h-2zM67 138h2v2h-2zM292 155h2v2h-2zM237 118h2v2h-2zM293 144h2v2h-2zM66 163h2v2h-2zM239 118h2v2h-2zM151 187h2v2h-2zM108 121h2v2h-2zM165 114h2v2h-2zM275 130h2v2h-2zM235 118h2v2h-2zM293 151h2v2h-2zM164 184h2v2h-2zM59 144h2v2h-2zM252 122h2v2h-2zM242 118h2v2h-2zM243 119h2v2h-2zM175 114h2v2h-2zM181 113h2v2h-2zM282 132h2v2h-2zM62 141h2v2h-2zM210 115h2v2h-2zM295 148h2v2h-2zM95 178h2v2h-2zM191 185h2v2h-2zM277 131h2v2h-2zM288 136h2v2h-2zM68 165h2v2h-2zM118 120h2v2h-2zM58 155h2v2h-2zM105 121h2v2h-2zM252 120h2v2h-2zM60 144h2v2h-2zM200 187h2v2h-2zM208 115h2v2h-2zM247 120h2v2h-2zM190 113h2v2h-2zM275 170h2v2h-2zM294 145h2v2h-2zM142 115h2v2h-2zM239 120h2v2h-2zM57 153h2v2h-2zM118 118h2v2h-2zM73 170h2v2h-2zM120 117h2v2h-2zM281 131h2v2h-2zM58 151h2v2h-2zM291 139h2v2h-2zM241 178h2v2h-2zM154 116h2v2h-2zM59 149h2v2h-2zM160 113h2v2h-2zM114 120h2v2h-2zM207 187h2v2h-2zM85 127h2v2h-2zM137 115h2v2h-2zM285 161h2v2h-2zM131 185h2v2h-2zM285 164h2v2h-2zM171 115h2v2h-2zM282 164h2v2h-2zM70 135h2v2h-2zM286 136h2v2h-2zM277 168h2v2h-2zM218 185h2v2h-2zM291 158h2v2h-2zM156 114h2v2h-2zM205 113h2v2h-2zM135 185h2v2h-2zM133 183h2v2h-2zM59 153h2v2h-2zM87 127h2v2h-2zM66 165h2v2h-2zM120 181h2v2h-2zM196 187h2v2h-2zM253 123h2v2h-2zM121 118h2v2h-2zM289 138h2v2h-2zM282 133h2v2h-2zM64 139h2v2h-2zM95 124h2v2h-2zM118 119h2v2h-2zM207 185h2v2h-2zM217 115h2v2h-2zM81 129h2v2h-2zM241 119h2v2h-2zM194 187h2v2h-2zM248 178h2v2h-2zM226 116h2v2h-2zM198 114h2v2h-2zM271 127h2v2h-2zM195 185h2v2h-2zM60 160h2v2h-2zM255 179h2v2h-2zM62 141h2v2h-2zM263 124h2v2h-2zM275 169h2v2h-2zM240 118h2v2h-2zM262 123h2v2h-2zM78 170h2v2h-2zM223 116h2v2h-2zM247 178h2v2h-2zM111 183h2v2h-2zM110 123h2v2h-2zM270 170h2v2h-2zM267 172h2v2h-2zM197 114h2v2h-2zM253 178h2v2h-2zM104 120h2v2h-2zM112 121h2v2h-2zM205 184h2v2h-2zM78 132h2v2h-2zM288 163h2v2h-2zM142 185h2v2h-2zM98 123h2v2h-2zM259 124h2v2h-2zM61 141h2v2h-2zM234 182h2v2h-2zM289 158h2v2h-2zM284 133h2v2h-2zM148 116h2v2h-2zM144 115h2v2h-2zM178 114h2v2h-2zM220 115h2v2h-2zM134 116h2v2h-2zM143 185h2v2h-2zM201 114h2v2h-2zM65 162h2v2h-2zM240 118h2v2h-2zM142 115h2v2h-2zM111 121h2v2h-2zM291 139h2v2h-2zM234 117h2v2h-2zM126 183h2v2h-2zM96 126h2v2h-2zM129 119h2v2h-2zM233 183h2v2h-2zM295 149h2v2h-2zM279 168h2v2h-2zM160 187h2v2h-2zM178 187h2v2h-2zM250 120h2v2h-2zM229 181h2v2h-2zM101 123h2v2h-2zM237 181h2v2h-2zM245 181h2v2h-2zM286 136h2v2h-2zM133 116h2v2h-2zM59 156h2v2h-2zM288 135h2v2h-2zM282 136h2v2h-2zM60 160h2v2h-2zM59 155h2v2h-2zM62 160h2v2h-2zM291 156h2v2h-2zM107 123h2v2h-2zM292 153h2v2h-2zM181 113h2v2h-2zM164 114h2v2h-2zM189 113h2v2h-2zM153 114h2v2h-2zM59 149h2v2h-2zM285 135h2v2h-2zM100 178h2v2h-2zM168 114h2v2h-2zM291 158h2v2h-2zM186 113h2v2h-2zM246 120h2v2h-2zM109 121h2v2h-2zM178 116h2v2h-2zM210 186h2v2h-2zM62 162h2v2h-2zM222 182h2v2h-2zM109 181h2v2h-2zM90 126h2v2h-2zM210 115h2v2h-2zM212 115h2v2h-2zM104 121h2v2h-2zM243 120h2v2h-2zM85 129h2v2h-2zM294 150h2v2h-2zM257 121h2v2h-2zM152 114h2v2h-2zM218 116h2v2h-2zM272 171h2v2h-2zM255 122h2v2h-2zM125 183h2v2h-2zM156 184h2v2h-2zM190 114h2v2h-2zM241 118h2v2h-2zM114 120h2v2h-2zM292 139h2v2h-2zM191 114h2v2h-2zM101 122h2v2h-2zM242 120h2v2h-2zM163 187h2v2h-2zM230 116h2v2h-2zM278 131h2v2h-2zM61 158h2v2h-2zM196 114h2v2h-2zM285 135h2v2h-2zM282 133h2v2h-2zM140 185h2v2h-2zM97 123h2v2h-2zM285 133h2v2h-2zM71 133h2v2h-2zM294 147h2v2h-2zM270 125h2v2h-2zM153 116h2v2h-2zM233 116h2v2h-2zM258 122h2v2h-2zM151 186h2v2h-2zM113 120h2v2h-2zM211 185h2v2h-2zM253 176h2v2h-2zM295 150h2v2h-2zM167 186h2v2h-2zM67 137h2v2h-2zM221 181h2v2h-2zM211 114h2v2h-2zM224 115h2v2h-2zM73 134h2v2h-2zM275 129h2v2h-2zM169 114h2v2h-2zM289 136h2v2h-2zM238 118h2v2h-2zM158 113h2v2h-2zM286 161h2v2h-2zM285 135h2v2h-2zM222 115h2v2h-2zM193 113h2v2h-2zM59 153h2v2h-2zM99 123h2v2h-2zM141 115h2v2h-2zM75 172h2v2h-2zM294 153h2v2h-2zM236 118h2v2h-2zM278 166h2v2h-2zM145 114h2v2h-2zM135 117h2v2h-2zM71 135h2v2h-2zM145 114h2v2h-2zM221 114h2v2h-2zM104 180h2v2h-2zM286 163h2v2h-2zM60 144h2v2h-2zM273 128h2v2h-2zM252 123h2v2h-2zM146 114h2v2h-2zM177 187h2v2h-2zM288 160h2v2h-2zM69 135h2v2h-2zM236 118h2v2h-2zM281 134h2v2h-2zM141 187h2v2h-2zM70 133h2v2h-2zM142 186h2v2h-2zM59 145h2v2h-2zM71 135h2v2h-2zM68 137h2v2h-2zM59 155h2v2h-2zM287 135h2v2h-2zM107 121h2v2h-2zM60 155h2v2h-2zM258 176h2v2h-2zM245 120h2v2h-2zM202 113h2v2h-2zM87 175h2v2h-2zM223 117h2v2h-2zM287 136h2v2h-2zM194 187h2v2h-2zM59 148h2v2h-2zM194 184h2v2h-2zM275 129h2v2h-2zM159 114h2v2h-2zM252 120h2v2h-2zM82 175h2v2h-2zM294 149h2v2h-2zM142 114h2v2h-2zM57 148h2v2h-2zM113 181h2v2h-2zM77 172h2v2h-2zM277 168h2v2h-2zM58 151h2v2h-2zM84 128h2v2h-2zM222 116h2v2h-2zM199 184h2v2h-2zM288 159h2v2h-2zM61 141h2v2h-2zM248 179h2v2h-2zM274 128h2v2h-2zM254 121h2v2h-2zM250 176h2v2h-2zM248 120h2v2h-2zM269 126h2v2h-2zM270 127h2v2h-2zM155 113h2v2h-2zM85 175h2v2h-2zM229 117h2v2h-2zM186 115h2v2h-2zM194 112h2v2h-2zM75 171h2v2h-2zM278 167h2v2h-2zM220 116h2v2h-2zM157 113h2v2h-2zM213 115h2v2h-2zM122 118h2v2h-2zM178 115h2v2h-2zM226 117h2v2h-2zM81 129h2v2h-2zM267 125h2v2h-2zM67 139h2v2h-2zM274 168h2v2h-2zM268 125h2v2h-2zM143 183h2v2h-2zM215 185h2v2h-2zM63 160h2v2h-2zM116 184h2v2h-2zM93 179h2v2h-2zM72 136h2v2h-2zM84 128h2v2h-2zM134 117h2v2h-2zM59 151h2v2h-2zM176 114h2v2h-2zM294 145h2v2h-2zM255 173h2v2h-2zM62 143h2v2h-2zM291 156h2v2h-2zM59 157h2v2h-2zM277 131h2v2h-2zM102 123h2v2h-2zM255 122h2v2h-2zM290 159h2v2h-2zM239 179h2v2h-2zM236 182h2v2h-2zM252 177h2v2h-2zM65 161h2v2h-2zM167 114h2v2h-2zM276 168h2v2h-2zM163 113h2v2h-2zM153 115h2v2h-2zM179 112h2v2h-2zM295 149h2v2h-2zM214 115h2v2h-2zM76 171h2v2h-2zM242 119h2v2h-2zM175 112h2v2h-2zM113 182h2v2h-2zM293 144h2v2h-2zM67 137h2v2h-2zM186 114h2v2h-2zM58 150h2v2h-2zM253 122h2v2h-2zM153 114h2v2h-2zM250 119h2v2h-2zM74 170h2v2h-2zM101 179h2v2h-2zM104 123h2v2h-2zM157 186h2v2h-2zM67 138h2v2h-2zM88 177h2v2h-2zM287 134h2v2h-2zM162 188h2v2h-2zM238 117h2v2h-2zM179 113h2v2h-2zM292 156h2v2h-2zM61 160h2v2h-2zM263 124h2v2h-2zM80 130h2v2h-2zM293 148h2v2h-2zM256 123h2v2h-2zM241 119h2v2h-2zM292 142h2v2h-2zM208 187h2v2h-2zM60 146h2v2h-2zM293 145h2v2h-2zM289 159h2v2h-2zM259 124h2v2h-2zM247 177h2v2h-2zM96 126h2v2h-2zM249 121h2v2h-2zM141 116h2v2h-2zM95 179h2v2h-2zM107 179h2v2h-2zM117 183h2v2h-2zM126 117h2v2h-2zM176 113h2v2h-2zM210 184h2v2h-2zM261 175h2v2h-2zM163 113h2v2h-2zM216 115h2v2h-2zM62 144h2v2h-2zM287 161h2v2h-2zM293 151h2v2h-2zM283 133h2v2h-2zM116 120h2v2h-2zM63 163h2v2h-2zM295 147h2v2h-2zM121 118h2v2h-2zM160 116h2v2h-2zM209 116h2v2h-2zM131 116h2v2h-2zM60 158h2v2h-2zM293 147h2v2h-2zM179 114h2v2h-2zM169 113h2v2h-2zM58 151h2v2h-2zM174 187h2v2h-2zM191 112h2v2h-2zM279 130h2v2h-2zM132 116h2v2h-2zM247 122h2v2h-2zM163 115h2v2h-2zM58 153h2v2h-2zM86 174h2v2h-2zM154 187h2v2h-2zM249 123h2v2h-2zM291 140h2v2h-2zM214 114h2v2h-2zM60 156h2v2h-2zM292 142h2v2h-2zM68 166h2v2h-2zM71 133h2v2h-2zM293 152h2v2h-2zM104 122h2v2h-2zM289 160h2v2h-2zM62 160h2v2h-2zM58 145h2v2h-2zM294 140h2v2h-2zM280 131h2v2h-2zM135 184h2v2h-2zM252 121h2v2h-2zM281 132h2v2h-2zM187 112h2v2h-2zM152 114h2v2h-2zM119 117h2v2h-2zM100 123h2v2h-2zM216 114h2v2h-2zM64 161h2v2h-2zM116 180h2v2h-2zM208 114h2v2h-2zM217 115h2v2h-2zM96 124h2v2h-2zM126 185h2v2h-2zM284 132h2v2h-2zM59 147h2v2h-2zM74 134h2v2h-2zM72 168h2v2h-2zM283 163h2v2h-2zM73 169h2v2h-2zM215 115h2v2h-2zM262 122h2v2h-2zM169 186h2v2h-2zM134 185h2v2h-2zM249 179h2v2h-2zM272 128h2v2h-2zM69 135h2v2h-2zM208 184h2v2h-2zM75 171h2v2h-2zM265 127h2v2h-2zM271 127h2v2h-2zM58 153h2v2h-2zM65 140h2v2h-2zM249 120h2v2h-2zM280 131h2v2h-2zM240 118h2v2h-2zM288 158h2v2h-2zM76 170h2v2h-2zM200 113h2v2h-2zM70 170h2v2h-2zM238 117h2v2h-2zM71 135h2v2h-2zM278 166h2v2h-2zM62 142h2v2h-2zM72 133h2v2h-2zM61 161h2v2h-2zM58 154h2v2h-2zM262 123h2v2h-2zM208 115h2v2h-2zM265 173h2v2h-2zM152 113h2v2h-2zM108 121h2v2h-2zM130 117h2v2h-2zM239 181h2v2h-2zM110 121h2v2h-2zM123 117h2v2h-2zM293 152h2v2h-2zM101 178h2v2h-2zM149 187h2v2h-2zM72 135h2v2h-2zM75 170h2v2h-2zM286 135h2v2h-2zM90 126h2v2h-2zM216 183h2v2h-2zM61 159h2v2h-2zM293 142h2v2h-2zM58 153h2v2h-2zM99 124h2v2h-2zM233 116h2v2h-2zM206 114h2v2h-2zM108 180h2v2h-2zM238 181h2v2h-2zM285 160h2v2h-2zM149 183h2v2h-2zM100 180h2v2h-2zM283 164h2v2h-2zM150 187h2v2h-2zM87 173h2v2h-2zM94 179h2v2h-2zM197 186h2v2h-2zM184 187h2v2h-2zM268 124h2v2h-2zM240 119h2v2h-2zM72 167h2v2h-2zM275 128h2v2h-2zM259 123h2v2h-2zM292 154h2v2h-2zM137 185h2v2h-2zM59 155h2v2h-2zM199 114h2v2h-2zM288 136h2v2h-2zM294 149h2v2h-2zM220 114h2v2h-2zM69 136h2v2h-2zM60 147h2v2h-2zM265 173h2v2h-2zM126 182h2v2h-2zM86 128h2v2h-2zM232 181h2v2h-2zM64 162h2v2h-2zM184 186h2v2h-2zM193 113h2v2h-2zM127 118h2v2h-2zM84 173h2v2h-2zM176 114h2v2h-2zM243 177h2v2h-2zM130 185h2v2h-2zM185 115h2v2h-2zM225 182h2v2h-2zM66 163h2v2h-2zM214 115h2v2h-2zM283 133h2v2h-2zM265 174h2v2h-2zM63 138h2v2h-2zM262 125h2v2h-2zM277 168h2v2h-2zM59 154h2v2h-2zM118 119h2v2h-2zM295 148h2v2h-2zM77 130h2v2h-2zM275 169h2v2h-2zM93 123h2v2h-2zM180 187h2v2h-2zM170 113h2v2h-2zM68 137h2v2h-2zM61 143h2v2h-2zM82 173h2v2h-2zM106 180h2v2h-2zM225 116h2v2h-2zM291 155h2v2h-2zM281 131h2v2h-2zM214 185h2v2h-2zM264 173h2v2h-2zM166 114h2v2h-2zM290 141h2v2h-2zM282 134h2v2h-2zM64 140h2v2h-2zM69 166h2v2h-2zM72 169h2v2h-2zM249 120h2v2h-2zM72 135h2v2h-2zM293 151h2v2h-2zM97 123h2v2h-2zM287 137h2v2h-2zM250 120h2v2h-2zM190 186h2v2h-2zM212 115h2v2h-2zM218 182h2v2h-2zM291 142h2v2h-2zM294 148h2v2h-2zM267 125h2v2h-2zM194 114h2v2h-2zM263 125h2v2h-2zM72 166h2v2h-2zM275 127h2v2h-2zM59 147h2v2h-2zM293 141h2v2h-2zM265 125h2v2h-2zM132 116h2v2h-2zM174 188h2v2h-2zM278 130h2v2h-2zM195 113h2v2h-2zM107 122h2v2h-2zM81 128h2v2h-2zM124 119h2v2h-2zM151 113h2v2h-2zM92 125h2v2h-2zM269 172h2v2h-2zM274 167h2v2h-2zM152 184h2v2h-2zM60 158h2v2h-2zM62 161h2v2h-2zM236 118h2v2h-2zM62 143h2v2h-2zM100 124h2v2h-2zM143 116h2v2h-2zM270 127h2v2h-2zM72 168h2v2h-2zM229 118h2v2h-2zM283 163h2v2h-2zM185 186h2v2h-2zM101 121h2v2h-2zM292 144h2v2h-2zM134 185h2v2h-2zM272 128h2v2h-2zM160 186h2v2h-2zM166 114h2v2h-2zM107 180h2v2h-2zM270 170h2v2h-2zM294 146h2v2h-2zM239 118h2v2h-2zM82 172h2v2h-2zM264 125h2v2h-2zM198 115h2v2h-2zM188 112h2v2h-2zM269 125h2v2h-2zM59 152h2v2h-2zM225 184h2v2h-2zM293 146h2v2h-2zM112 119h2v2h-2zM170 115h2v2h-2zM248 120h2v2h-2zM276 168h2v2h-2zM202 115h2v2h-2zM163 186h2v2h-2zM123 117h2v2h-2zM133 116h2v2h-2zM166 188h2v2h-2zM83 173h2v2h-2zM174 187h2v2h-2zM132 183h2v2h-2zM88 128h2v2h-2zM277 129h2v2h-2zM107 121h2v2h-2zM259 124h2v2h-2zM59 156h2v2h-2zM280 167h2v2h-2zM199 113h2v2h-2zM203 114h2v2h-2zM120 116h2v2h-2zM258 174h2v2h-2zM282 134h2v2h-2zM93 126h2v2h-2zM250 122h2v2h-2zM167 113h2v2h-2zM58 148h2v2h-2zM57 150h2v2h-2zM280 132h2v2h-2zM293 143h2v2h-2zM101 123h2v2h-2zM161 113h2v2h-2zM140 115h2v2h-2zM292 149h2v2h-2zM271 127h2v2h-2zM61 142h2v2h-2zM254 122h2v2h-2zM218 183h2v2h-2zM293 150h2v2h-2zM190 113h2v2h-2zM106 180h2v2h-2zM290 140h2v2h-2zM294 144h2v2h-2zM161 187h2v2h-2zM159 114h2v2h-2zM230 180h2v2h-2zM119 119h2v2h-2zM291 139h2v2h-2zM111 119h2v2h-2zM209 114h2v2h-2zM232 182h2v2h-2zM248 119h2v2h-2zM73 170h2v2h-2zM277 129h2v2h-2zM270 126h2v2h-2zM117 120h2v2h-2zM290 140h2v2h-2zM144 116h2v2h-2zM58 146h2v2h-2zM282 133h2v2h-2zM193 115h2v2h-2zM134 117h2v2h-2zM252 120h2v2h-2zM294 146h2v2h-2zM140 116h2v2h-2zM119 183h2v2h-2zM73 168h2v2h-2zM153 115h2v2h-2zM145 185h2v2h-2zM75 135h2v2h-2zM198 114h2v2h-2zM197 114h2v2h-2zM82 129h2v2h-2zM294 143h2v2h-2zM70 135h2v2h-2zM182 113h2v2h-2zM85 127h2v2h-2zM122 183h2v2h-2zM293 145h2v2h-2zM232 116h2v2h-2zM224 184h2v2h-2zM110 121h2v2h-2zM106 120h2v2h-2zM121 118h2v2h-2zM235 118h2v2h-2zM93 177h2v2h-2zM63 144h2v2h-2zM288 161h2v2h-2zM252 122h2v2h-2zM68 165h2v2h-2zM260 124h2v2h-2zM291 141h2v2h-2zM243 178h2v2h-2zM72 166h2v2h-2zM272 127h2v2h-2zM184 113h2v2h-2zM187 113h2v2h-2zM142 186h2v2h-2zM60 142h2v2h-2zM200 113h2v2h-2zM118 182h2v2h-2zM120 182h2v2h-2zM115 180h2v2h-2zM117 180h2v2h-2zM119 184h2v2h-2zM118 180h2v2h-2zM120 184h2v2h-2zM118 181h2v2h-2zM119 180h2v2h-2zM119 181h2v2h-2zM117 180h2v2h-2zM121 180h2v2h-2zM117 182h2v2h-2zM119 178h2v2h-2zM122 183h2v2h-2zM119 182h2v2h-2zM117 180h2v2h-2zM118 178h2v2h-2zM227 183h2v2h-2zM219 183h2v2h-2zM224 185h2v2h-2zM224 180h2v2h-2zM220 180h2v2h-2zM226 180h2v2h-2zM219 180h2v2h-2zM219 182h2v2h-2zM220 183h2v2h-2zM221 185h2v2h-2zM226 182h2v2h-2zM220 181h2v2h-2zM228 182h2v2h-2zM223 185h2v2h-2zM225 181h2v2h-2zM224 180h2v2h-2zM221 183h2v2h-2zM222 183h2v2h-2zM180 109h2v2h-2zM180 108h2v2h-2zM181 109h2v2h-2zM183 110h2v2h-2zM183 111h2v2h-2zM181 108h2v2h-2zM180 112h2v2h-2zM177 110h2v2h-2zM288 154h2v2h-2zM292 153h2v2h-2zM289 152h2v2h-2zM290 152h2v2h-2zM291 153h2v2h-2zM289 152h2v2h-2zM291 153h2v2h-2zM291 152h2v2h-2zM293 152h2v2h-2zM289 152h2v2h-2zM289 152h2v2h-2zM294 150h2v2h-2zM290 152h2v2h-2zM293 151h2v2h-2zM291 152h2v2h-2zM290 151h2v2h-2zM57 154h2v2h-2zM63 154h2v2h-2zM56 154h2v2h-2zM61 156h2v2h-2zM56 151h2v2h-2zM58 155h2v2h-2zM61 155h2v2h-2zM59 152h2v2h-2zM59 154h2v2h-2zM63 154h2v2h-2zM60 153h2v2h-2zM61 154h2v2h-2z"/>
</svg>
<svg width="360" height="361" viewBox="0 0 360 361" style="position:absolute;left:586px;top:96px" shape-rendering="crispEdges">
<defs><clipPath id="cp2"><rect x="1" y="1" width="358" height="359"/></clipPath></defs>
<rect x="0.5" y="0.5" width="359" height="360" fill="#fff" stroke="#646464"/>
<g clip-path="url(#cp2)" fill="none" stroke-width="1">
<path stroke="#787878" d="M84.0 235.8 L17.3 389.8 M84.0 235.8 L66.2 34.3 M84.0 235.8 L275.0 235.8 M17.3 389.8 L-41.4 52.7 M17.3 389.8 L341.7 389.8 M66.2 34.3 L-41.4 52.7 M66.2 34.3 L292.8 34.3 M-41.4 52.7 L400.4 52.7 M275.0 235.8 L341.7 389.8 M275.0 235.8 L292.8 34.3 M341.7 389.8 L400.4 52.7 M292.8 34.3 L400.4 52.7"/>
<path stroke="#3cb03c" d="M179.5 299.2 L181.9 299.0 L184.1 298.6 L186.2 297.9 L188.0 297.0 L189.4 295.9 L190.5 294.7 L191.1 293.4 L191.3 292.0 L191.0 290.6 L190.3 289.3 L189.1 288.2 L187.7 287.1 L185.9 286.3 L183.9 285.7 L181.7 285.3 L179.5 285.2 L177.3 285.3 L175.1 285.7 L173.1 286.3 L171.3 287.1 L169.9 288.2 L168.7 289.3 L168.0 290.6 L167.7 292.0 L167.9 293.4 L168.5 294.7 L169.6 295.9 L171.0 297.0 L172.8 297.9 L174.9 298.6 L177.1 299.0 L179.5 299.2 M179.5 305.1 L184.3 304.9 L188.9 304.0 L193.1 302.6 L196.7 300.7 L199.5 298.5 L201.6 295.9 L202.7 293.3 L202.9 290.5 L202.2 287.9 L200.7 285.3 L198.4 283.0 L195.5 281.1 L192.0 279.5 L188.1 278.3 L183.9 277.6 L179.5 277.3 L175.1 277.6 L170.9 278.3 L167.0 279.5 L163.5 281.1 L160.6 283.0 L158.3 285.3 L156.8 287.9 L156.1 290.5 L156.3 293.3 L157.4 295.9 L159.5 298.5 L162.3 300.7 L165.9 302.6 L170.1 304.0 L174.7 304.9 L179.5 305.1 M179.5 310.3 L186.9 309.8 L193.9 308.5 L200.2 306.3 L205.6 303.4 L209.8 300.0 L212.7 296.2 L214.3 292.2 L214.4 288.1 L213.3 284.2 L210.9 280.5 L207.4 277.2 L203.0 274.3 L197.8 272.1 L192.0 270.4 L185.8 269.4 L179.5 269.0 L173.2 269.4 L167.0 270.4 L161.2 272.1 L156.0 274.3 L151.6 277.2 L148.1 280.5 L145.7 284.2 L144.6 288.1 L144.7 292.2 L146.3 296.2 L149.2 300.0 L153.4 303.4 L158.8 306.3 L165.1 308.5 L172.1 309.8 L179.5 310.3 M179.5 314.5 L189.5 313.9 L199.0 312.0 L207.5 309.0 L214.6 305.1 L220.2 300.5 L223.9 295.4 L225.7 290.1 L225.7 284.7 L224.0 279.6 L220.6 274.9 L215.9 270.6 L210.0 267.0 L203.2 264.1 L195.7 262.1 L187.7 260.8 L179.5 260.4 L171.3 260.8 L163.3 262.1 L155.8 264.1 L149.0 267.0 L143.1 270.6 L138.4 274.9 L135.0 279.6 L133.3 284.7 L133.3 290.1 L135.1 295.4 L138.8 300.5 L144.4 305.1 L151.5 309.0 L160.0 312.0 L169.5 313.9 L179.5 314.5 M179.5 317.6 L192.2 316.8 L204.2 314.4 L214.9 310.6 L223.8 305.7 L230.5 299.9 L234.9 293.5 L236.9 286.9 L236.6 280.4 L234.2 274.2 L229.9 268.5 L224.0 263.4 L216.7 259.2 L208.3 255.8 L199.1 253.4 L189.4 251.9 L179.5 251.4 L169.6 251.9 L159.9 253.4 L150.7 255.8 L142.3 259.2 L135.0 263.4 L129.1 268.5 L124.8 274.2 L122.4 280.4 L122.1 286.9 L124.1 293.5 L128.5 299.9 L135.2 305.7 L144.1 310.6 L154.8 314.4 L166.8 316.8 L179.5 317.6 M179.5 319.5 L194.9 318.5 L209.4 315.6 L222.3 311.0 L232.9 305.0 L240.7 298.1 L245.7 290.5 L247.8 282.8 L247.2 275.2 L244.1 268.0 L238.7 261.4 L231.6 255.7 L222.9 250.9 L213.0 247.1 L202.3 244.3 L191.1 242.7 L179.5 242.1 L167.9 242.7 L156.7 244.3 L146.0 247.1 L136.1 250.9 L127.4 255.7 L120.3 261.4 L114.9 268.0 L111.8 275.2 L111.2 282.8 L113.3 290.5 L118.3 298.1 L126.1 305.0 L136.7 311.0 L149.6 315.6 L164.1 318.5 L179.5 319.5 M179.5 320.0 L197.6 318.9 L214.7 315.4 L229.7 310.0 L241.8 303.1 L250.8 295.0 L256.2 286.4 L258.3 277.6 L257.2 269.0 L253.3 261.0 L247.0 253.8 L238.7 247.4 L228.7 242.2 L217.4 238.0 L205.3 235.0 L192.5 233.2 L179.5 232.6 L166.5 233.2 L153.7 235.0 L141.6 238.0 L130.3 242.2 L120.3 247.4 L112.0 253.8 L105.7 261.0 L101.8 269.0 L100.7 277.6 L102.8 286.4 L108.2 295.0 L117.2 303.1 L129.3 310.0 L144.3 315.4 L161.4 318.9 L179.5 320.0 M179.5 319.1 L200.4 317.7 L219.9 313.8 L236.9 307.7 L250.6 299.8 L260.5 290.8 L266.3 281.1 L268.3 271.4 L266.7 262.0 L262.0 253.3 L254.7 245.5 L245.2 238.7 L234.0 233.1 L221.4 228.7 L208.0 225.5 L193.9 223.6 L179.5 223.0 L165.1 223.6 L151.0 225.5 L137.6 228.7 L125.0 233.1 L113.8 238.7 L104.3 245.5 L97.0 253.3 L92.3 262.0 L90.7 271.4 L92.7 281.1 L98.5 290.8 L108.4 299.8 L122.1 307.7 L139.1 313.8 L158.6 317.7 L179.5 319.1 M179.5 316.5 L203.0 315.0 L224.9 310.6 L243.9 303.8 L259.1 295.1 L269.7 285.2 L275.9 274.7 L277.7 264.2 L275.6 254.2 L270.1 244.9 L261.8 236.7 L251.2 229.6 L238.8 223.7 L225.1 219.1 L210.4 215.8 L195.1 213.9 L179.5 213.2 L163.9 213.9 L148.6 215.8 L133.9 219.1 L120.2 223.7 L107.8 229.6 L97.2 236.7 L88.9 244.9 L83.4 254.2 L81.3 264.2 L83.1 274.7 L89.3 285.2 L99.9 295.1 L115.1 303.8 L134.1 310.6 L156.0 315.0 L179.5 316.5 M179.5 312.1 L205.5 310.5 L229.8 305.7 L250.6 298.3 L267.0 288.9 L278.4 278.3 L284.8 267.2 L286.3 256.1 L283.7 245.5 L277.4 235.9 L268.1 227.3 L256.5 220.0 L243.1 214.0 L228.3 209.3 L212.5 206.0 L196.2 204.0 L179.5 203.4 L162.8 204.0 L146.5 206.0 L130.7 209.3 L115.9 214.0 L102.5 220.0 L90.9 227.3 L81.6 235.9 L75.3 245.5 L72.7 256.1 L74.2 267.2 L80.6 278.3 L92.0 288.9 L108.4 298.3 L129.2 305.7 L153.5 310.5 L179.5 312.1 M179.5 305.9 L207.9 304.1 L234.3 299.1 L256.8 291.2 L274.4 281.3 L286.4 270.1 L292.9 258.5 L294.2 247.0 L291.0 236.2 L283.9 226.3 L273.8 217.6 L261.3 210.2 L246.9 204.1 L231.1 199.4 L214.4 196.1 L197.1 194.1 L179.5 193.4 L161.9 194.1 L144.6 196.1 L127.9 199.4 L112.1 204.1 L97.7 210.2 L85.2 217.6 L75.1 226.3 L68.0 236.2 L64.8 247.0 L66.1 258.5 L72.6 270.1 L84.6 281.3 L102.2 291.2 L124.7 299.1 L151.1 304.1 L179.5 305.9 M179.5 297.8 L210.1 295.9 L238.4 290.7 L262.4 282.5 L281.0 272.2 L293.5 260.7 L300.1 248.8 L301.1 237.1 L297.3 226.1 L289.6 216.2 L278.7 207.5 L265.4 200.1 L250.2 194.0 L233.6 189.4 L216.0 186.1 L197.9 184.1 L179.5 183.4 L161.1 184.1 L143.0 186.1 L125.4 189.4 L108.8 194.0 L93.6 200.1 L80.3 207.5 L69.4 216.2 L61.7 226.1 L57.9 237.1 L58.9 248.8 L65.5 260.7 L78.0 272.2 L96.6 282.5 L120.6 290.7 L148.9 295.9 L179.5 297.8 M179.5 287.7 L212.0 285.8 L242.0 280.4 L267.3 272.1 L286.7 261.7 L299.7 250.0 L306.2 238.1 L307.0 226.4 L302.7 215.4 L294.4 205.6 L282.9 197.0 L268.8 189.7 L252.9 183.8 L235.6 179.2 L217.4 176.0 L198.6 174.1 L179.5 173.4 L160.4 174.1 L141.6 176.0 L123.4 179.2 L106.1 183.8 L90.2 189.7 L76.1 197.0 L64.6 205.6 L56.3 215.4 L52.0 226.4 L52.8 238.1 L59.3 250.0 L72.3 261.7 L91.7 272.1 L117.0 280.4 L147.0 285.8 L179.5 287.7 M179.5 275.8 L213.6 273.9 L244.9 268.5 L271.3 260.2 L291.4 249.8 L304.7 238.3 L311.2 226.4 L311.7 214.9 L307.1 204.2 L298.3 194.6 L286.2 186.2 L271.6 179.2 L255.1 173.5 L237.2 169.1 L218.5 165.9 L199.1 164.1 L179.5 163.5 L159.9 164.1 L140.5 165.9 L121.8 169.1 L103.9 173.5 L87.4 179.2 L72.8 186.2 L60.7 194.6 L51.9 204.2 L47.3 214.9 L47.8 226.4 L54.3 238.3 L67.6 249.8 L87.7 260.2 L114.1 268.5 L145.4 273.9 L179.5 275.8 M179.5 262.0 L214.7 260.2 L247.1 254.9 L274.4 246.8 L295.0 236.6 L308.4 225.4 L314.9 214.0 L315.3 202.9 L310.3 192.5 L301.1 183.3 L288.6 175.3 L273.6 168.5 L256.7 163.1 L238.4 158.9 L219.2 155.9 L199.5 154.1 L179.5 153.6 L159.5 154.1 L139.8 155.9 L120.6 158.9 L102.3 163.1 L85.4 168.5 L70.4 175.3 L57.9 183.3 L48.7 192.5 L43.7 202.9 L44.1 214.0 L50.6 225.4 L64.0 236.6 L84.6 246.8 L111.9 254.9 L144.3 260.2 L179.5 262.0 M179.5 246.7 L215.5 244.9 L248.6 239.9 L276.3 232.1 L297.2 222.4 L310.8 211.7 L317.3 200.8 L317.5 190.3 L312.4 180.5 L302.9 171.8 L290.2 164.2 L274.8 157.8 L257.7 152.7 L239.1 148.7 L219.7 145.9 L199.7 144.3 L179.5 143.7 L159.3 144.3 L139.3 145.9 L119.9 148.7 L101.3 152.7 L84.2 157.8 L68.8 164.2 L56.1 171.8 L46.6 180.5 L41.5 190.3 L41.7 200.8 L48.2 211.7 L61.8 222.4 L82.7 232.1 L110.4 239.9 L143.5 244.9 L179.5 246.7 M179.5 230.0 L215.8 228.3 L249.1 223.6 L277.1 216.3 L298.1 207.3 L311.7 197.3 L318.2 187.1 L318.4 177.3 L313.1 168.2 L303.6 160.1 L290.7 153.0 L275.3 147.1 L258.0 142.3 L239.4 138.6 L219.9 136.1 L199.8 134.5 L179.5 134.0 L159.2 134.5 L139.1 136.1 L119.6 138.6 L101.0 142.3 L83.7 147.1 L68.3 153.0 L55.4 160.1 L45.9 168.2 L40.6 177.3 L40.8 187.1 L47.3 197.3 L60.9 207.3 L81.9 216.3 L109.9 223.6 L143.2 228.3 L179.5 230.0 M179.5 212.2 L215.6 210.7 L248.8 206.4 L276.6 199.7 L297.5 191.5 L311.1 182.4 L317.6 173.1 L317.8 164.1 L312.6 155.8 L303.2 148.3 L290.4 141.9 L275.0 136.4 L257.8 132.1 L239.2 128.7 L219.8 126.3 L199.8 124.9 L179.5 124.4 L159.2 124.9 L139.2 126.3 L119.8 128.7 L101.2 132.1 L84.0 136.4 L68.6 141.9 L55.8 148.3 L46.4 155.8 L41.2 164.1 L41.4 173.1 L47.9 182.4 L61.5 191.5 L82.4 199.7 L110.2 206.4 L143.4 210.7 L179.5 212.2 M179.5 193.8 L214.9 192.4 L247.5 188.6 L274.8 182.6 L295.5 175.3 L309.0 167.1 L315.5 158.8 L315.8 150.8 L310.8 143.3 L301.5 136.6 L289.0 130.8 L273.9 125.9 L256.9 121.9 L238.6 118.9 L219.3 116.7 L199.6 115.5 L179.5 115.0 L159.4 115.5 L139.7 116.7 L120.4 118.9 L102.1 121.9 L85.1 125.9 L70.0 130.8 L57.5 136.6 L48.2 143.3 L43.2 150.8 L43.5 158.8 L50.0 167.1 L63.5 175.3 L84.2 182.6 L111.5 188.6 L144.1 192.4 L179.5 193.8 M179.5 175.0 L213.7 173.8 L245.2 170.5 L271.8 165.4 L292.0 159.0 L305.2 151.9 L311.8 144.6 L312.3 137.5 L307.6 130.9 L298.7 125.0 L286.5 119.9 L271.9 115.5 L255.3 112.0 L237.4 109.3 L218.6 107.4 L199.2 106.3 L179.5 105.9 L159.8 106.3 L140.4 107.4 L121.6 109.3 L103.7 112.0 L87.1 115.5 L72.5 119.9 L60.3 125.0 L51.4 130.9 L46.7 137.5 L47.2 144.6 L53.8 151.9 L67.0 159.0 L87.2 165.4 L113.8 170.5 L145.3 173.8 L179.5 175.0 M179.5 156.4 L212.1 155.4 L242.1 152.6 L267.6 148.2 L287.0 142.8 L300.0 136.8 L306.5 130.6 L307.3 124.5 L303.0 118.8 L294.7 113.7 L283.1 109.2 L269.0 105.5 L253.0 102.4 L235.7 100.0 L217.5 98.4 L198.6 97.4 L179.5 97.0 L160.4 97.4 L141.5 98.4 L123.3 100.0 L106.0 102.4 L90.0 105.5 L75.9 109.2 L64.3 113.7 L56.0 118.8 L51.7 124.5 L52.5 130.6 L59.0 136.8 L72.0 142.8 L91.4 148.2 L116.9 152.6 L146.9 155.4 L179.5 156.4 M179.5 138.2 L210.0 137.5 L238.2 135.2 L262.2 131.6 L280.7 127.1 L293.2 122.1 L299.8 116.9 L300.8 111.9 L297.1 107.1 L289.4 102.8 L278.5 99.0 L265.2 95.7 L250.0 93.1 L233.5 91.1 L216.0 89.6 L197.9 88.8 L179.5 88.5 L161.1 88.8 L143.0 89.6 L125.5 91.1 L109.0 93.1 L93.8 95.7 L80.5 99.0 L69.6 102.8 L61.9 107.1 L58.2 111.9 L59.2 116.9 L65.8 122.1 L78.3 127.1 L96.8 131.6 L120.8 135.2 L149.0 137.5 L179.5 138.2 M179.5 121.1 L207.5 120.4 L233.6 118.6 L255.8 115.8 L273.2 112.2 L285.1 108.2 L291.6 104.0 L292.9 99.8 L289.8 95.9 L282.9 92.3 L272.9 89.2 L260.5 86.5 L246.3 84.3 L230.7 82.6 L214.1 81.3 L197.0 80.6 L179.5 80.4 L162.0 80.6 L144.9 81.3 L128.3 82.6 L112.7 84.3 L98.5 86.5 L86.1 89.2 L76.1 92.3 L69.2 95.9 L66.1 99.8 L67.4 104.0 L73.9 108.2 L85.8 112.2 L103.2 115.8 L125.4 118.6 L151.5 120.4 L179.5 121.1 M179.5 105.1 L204.8 104.6 L228.3 103.2 L248.6 101.0 L264.6 98.3 L275.8 95.1 L282.1 91.8 L283.8 88.5 L281.3 85.4 L275.2 82.5 L266.3 79.9 L255.0 77.8 L241.8 76.0 L227.3 74.5 L211.9 73.5 L195.8 72.9 L179.5 72.7 L163.2 72.9 L147.1 73.5 L131.7 74.5 L117.2 76.0 L104.0 77.8 L92.7 79.9 L83.8 82.5 L77.7 85.4 L75.2 88.5 L76.9 91.8 L83.2 95.1 L94.4 98.3 L110.4 101.0 L130.7 103.2 L154.2 104.6 L179.5 105.1 M179.5 90.7 L201.8 90.3 L222.6 89.3 L240.7 87.7 L255.2 85.6 L265.5 83.2 L271.5 80.7 L273.4 78.1 L271.5 75.7 L266.4 73.5 L258.5 71.4 L248.4 69.7 L236.6 68.3 L223.4 67.1 L209.3 66.3 L194.5 65.8 L179.5 65.7 L164.5 65.8 L149.7 66.3 L135.6 67.1 L122.4 68.3 L110.6 69.7 L100.5 71.4 L92.6 73.5 L87.5 75.7 L85.6 78.1 L87.5 80.7 L93.5 83.2 L103.8 85.6 L118.3 87.7 L136.4 89.3 L157.2 90.3 L179.5 90.7 M179.5 78.0 L198.6 77.7 L216.5 77.0 L232.2 75.8 L245.0 74.3 L254.2 72.6 L259.8 70.7 L261.9 68.8 L260.7 67.0 L256.5 65.3 L249.8 63.7 L241.0 62.4 L230.6 61.3 L218.9 60.4 L206.2 59.8 L193.0 59.4 L179.5 59.3 L166.0 59.4 L152.8 59.8 L140.1 60.4 L128.4 61.3 L118.0 62.4 L109.2 63.7 L102.5 65.3 L98.3 67.0 L97.1 68.8 L99.2 70.7 L104.8 72.6 L114.0 74.3 L126.8 75.8 L142.5 77.0 L160.4 77.7 L179.5 78.0 M179.5 67.1 L195.3 67.0 L210.2 66.5 L223.4 65.7 L234.3 64.6 L242.3 63.4 L247.4 62.1 L249.5 60.7 L248.8 59.4 L245.5 58.1 L240.1 57.0 L232.7 56.0 L223.8 55.1 L213.7 54.5 L202.8 54.0 L191.3 53.7 L179.5 53.6 L167.7 53.7 L156.2 54.0 L145.3 54.5 L135.2 55.1 L126.3 56.0 L118.9 57.0 L113.5 58.1 L110.2 59.4 L109.5 60.7 L111.6 62.1 L116.7 63.4 L124.7 64.6 L135.6 65.7 L148.8 66.5 L163.7 67.0 L179.5 67.1 M179.5 58.2 L192.0 58.1 L203.9 57.8 L214.4 57.2 L223.2 56.5 L229.9 55.7 L234.3 54.8 L236.3 53.9 L236.0 53.0 L233.7 52.1 L229.4 51.3 L223.5 50.6 L216.3 50.0 L208.0 49.5 L198.9 49.1 L189.4 48.9 L179.5 48.9 L169.6 48.9 L160.1 49.1 L151.0 49.5 L142.7 50.0 L135.5 50.6 L129.6 51.3 L125.3 52.1 L123.0 53.0 L122.7 53.9 L124.7 54.8 L129.1 55.7 L135.8 56.5 L144.6 57.2 L155.1 57.8 L167.0 58.1 L179.5 58.2 M179.5 51.2 L188.7 51.2 L197.5 51.0 L205.4 50.6 L212.1 50.2 L217.2 49.7 L220.7 49.1 L222.5 48.5 L222.6 47.9 L221.0 47.3 L217.9 46.8 L213.5 46.3 L208.1 45.9 L201.7 45.5 L194.7 45.3 L187.2 45.1 L179.5 45.1 L171.8 45.1 L164.3 45.3 L157.3 45.5 L150.9 45.9 L145.5 46.3 L141.1 46.8 L138.0 47.3 L136.4 47.9 L136.5 48.5 L138.3 49.1 L141.8 49.7 L146.9 50.2 L153.6 50.6 L161.5 51.0 L170.3 51.2 L179.5 51.2 M179.5 46.1 L185.5 46.1 L191.3 46.0 L196.5 45.8 L201.0 45.5 L204.5 45.2 L207.0 44.9 L208.3 44.5 L208.5 44.2 L207.6 43.8 L205.7 43.5 L202.8 43.2 L199.2 42.9 L194.8 42.7 L190.0 42.6 L184.8 42.5 L179.5 42.5 L174.2 42.5 L169.0 42.6 L164.2 42.7 L159.8 42.9 L156.2 43.2 L153.3 43.5 L151.4 43.8 L150.5 44.2 L150.7 44.5 L152.0 44.9 L154.5 45.2 L158.0 45.5 L162.5 45.8 L167.7 46.0 L173.5 46.1 L179.5 46.1 M179.5 42.8 L182.4 42.8 L185.3 42.7 L187.8 42.7 L190.1 42.5 L191.9 42.4 L193.2 42.3 L193.9 42.1 L194.1 41.9 L193.7 41.8 L192.8 41.6 L191.4 41.5 L189.6 41.3 L187.4 41.2 L184.9 41.2 L182.3 41.1 L179.5 41.1 L176.7 41.1 L174.1 41.2 L171.6 41.2 L169.4 41.3 L167.6 41.5 L166.2 41.6 L165.3 41.8 L164.9 41.9 L165.1 42.1 L165.8 42.3 L167.1 42.4 L168.9 42.5 L171.2 42.7 L173.7 42.7 L176.6 42.8 L179.5 42.8 M179.5 292.5 L179.5 299.2 L179.5 305.1 L179.5 310.3 L179.5 314.5 L179.5 317.6 L179.5 319.5 L179.5 320.0 L179.5 319.1 L179.5 316.5 L179.5 312.1 L179.5 305.9 L179.5 297.8 L179.5 287.7 L179.5 275.8 L179.5 262.0 L179.5 246.7 L179.5 230.0 L179.5 212.2 L179.5 193.8 L179.5 175.0 L179.5 156.4 L179.5 138.2 L179.5 121.1 L179.5 105.1 L179.5 90.7 L179.5 78.0 L179.5 67.1 L179.5 58.2 L179.5 51.2 L179.5 46.1 L179.5 42.8 L179.5 41.2 M179.5 292.5 L181.9 299.0 L184.3 304.9 L186.9 309.8 L189.5 313.9 L192.2 316.8 L194.9 318.5 L197.6 318.9 L200.4 317.7 L203.0 315.0 L205.5 310.5 L207.9 304.1 L210.1 295.9 L212.0 285.8 L213.6 273.9 L214.7 260.2 L215.5 244.9 L215.8 228.3 L215.6 210.7 L214.9 192.4 L213.7 173.8 L212.1 155.4 L210.0 137.5 L207.5 120.4 L204.8 104.6 L201.8 90.3 L198.6 77.7 L195.3 67.0 L192.0 58.1 L188.7 51.2 L185.5 46.1 L182.4 42.8 L179.5 41.2 M179.5 292.5 L184.1 298.6 L188.9 304.0 L193.9 308.5 L199.0 312.0 L204.2 314.4 L209.4 315.6 L214.7 315.4 L219.9 313.8 L224.9 310.6 L229.8 305.7 L234.3 299.1 L238.4 290.7 L242.0 280.4 L244.9 268.5 L247.1 254.9 L248.6 239.9 L249.1 223.6 L248.8 206.4 L247.5 188.6 L245.2 170.5 L242.1 152.6 L238.2 135.2 L233.6 118.6 L228.3 103.2 L222.6 89.3 L216.5 77.0 L210.2 66.5 L203.9 57.8 L197.5 51.0 L191.3 46.0 L185.3 42.7 L179.5 41.2 M179.5 292.5 L186.2 297.9 L193.1 302.6 L200.2 306.3 L207.5 309.0 L214.9 310.6 L222.3 311.0 L229.7 310.0 L236.9 307.7 L243.9 303.8 L250.6 298.3 L256.8 291.2 L262.4 282.5 L267.3 272.1 L271.3 260.2 L274.4 246.8 L276.3 232.1 L277.1 216.3 L276.6 199.7 L274.8 182.6 L271.8 165.4 L267.6 148.2 L262.2 131.6 L255.8 115.8 L248.6 101.0 L240.7 87.7 L232.2 75.8 L223.4 65.7 L214.4 57.2 L205.4 50.6 L196.5 45.8 L187.8 42.7 L179.5 41.2 M179.5 292.5 L188.0 297.0 L196.7 300.7 L205.6 303.4 L214.6 305.1 L223.8 305.7 L232.9 305.0 L241.8 303.1 L250.6 299.8 L259.1 295.1 L267.0 288.9 L274.4 281.3 L281.0 272.2 L286.7 261.7 L291.4 249.8 L295.0 236.6 L297.2 222.4 L298.1 207.3 L297.5 191.5 L295.5 175.3 L292.0 159.0 L287.0 142.8 L280.7 127.1 L273.2 112.2 L264.6 98.3 L255.2 85.6 L245.0 74.3 L234.3 64.6 L223.2 56.5 L212.1 50.2 L201.0 45.5 L190.1 42.5 L179.5 41.2 M179.5 292.5 L189.4 295.9 L199.5 298.5 L209.8 300.0 L220.2 300.5 L230.5 299.9 L240.7 298.1 L250.8 295.0 L260.5 290.8 L269.7 285.2 L278.4 278.3 L286.4 270.1 L293.5 260.7 L299.7 250.0 L304.7 238.3 L308.4 225.4 L310.8 211.7 L311.7 197.3 L311.1 182.4 L309.0 167.1 L305.2 151.9 L300.0 136.8 L293.2 122.1 L285.1 108.2 L275.8 95.1 L265.5 83.2 L254.2 72.6 L242.3 63.4 L229.9 55.7 L217.2 49.7 L204.5 45.2 L191.9 42.4 L179.5 41.2 M179.5 292.5 L190.5 294.7 L201.6 295.9 L212.7 296.2 L223.9 295.4 L234.9 293.5 L245.7 290.5 L256.2 286.4 L266.3 281.1 L275.9 274.7 L284.8 267.2 L292.9 258.5 L300.1 248.8 L306.2 238.1 L311.2 226.4 L314.9 214.0 L317.3 200.8 L318.2 187.1 L317.6 173.1 L315.5 158.8 L311.8 144.6 L306.5 130.6 L299.8 116.9 L291.6 104.0 L282.1 91.8 L271.5 80.7 L259.8 70.7 L247.4 62.1 L234.3 54.8 L220.7 49.1 L207.0 44.9 L193.2 42.3 L179.5 41.2 M179.5 292.5 L191.1 293.4 L202.7 293.3 L214.3 292.2 L225.7 290.1 L236.9 286.9 L247.8 282.8 L258.3 277.6 L268.3 271.4 L277.7 264.2 L286.3 256.1 L294.2 247.0 L301.1 237.1 L307.0 226.4 L311.7 214.9 L315.3 202.9 L317.5 190.3 L318.4 177.3 L317.8 164.1 L315.8 150.8 L312.3 137.5 L307.3 124.5 L300.8 111.9 L292.9 99.8 L283.8 88.5 L273.4 78.1 L261.9 68.8 L249.5 60.7 L236.3 53.9 L222.5 48.5 L208.3 44.5 L193.9 42.1 L179.5 41.2 M179.5 292.5 L191.3 292.0 L202.9 290.5 L214.4 288.1 L225.7 284.7 L236.6 280.4 L247.2 275.2 L257.2 269.0 L266.7 262.0 L275.6 254.2 L283.7 245.5 L291.0 236.2 L297.3 226.1 L302.7 215.4 L307.1 204.2 L310.3 192.5 L312.4 180.5 L313.1 168.2 L312.6 155.8 L310.8 143.3 L307.6 130.9 L303.0 118.8 L297.1 107.1 L289.8 95.9 L281.3 85.4 L271.5 75.7 L260.7 67.0 L248.8 59.4 L236.0 53.0 L222.6 47.9 L208.5 44.2 L194.1 41.9 L179.5 41.2 M179.5 292.5 L191.0 290.6 L202.2 287.9 L213.3 284.2 L224.0 279.6 L234.2 274.2 L244.1 268.0 L253.3 261.0 L262.0 253.3 L270.1 244.9 L277.4 235.9 L283.9 226.3 L289.6 216.2 L294.4 205.6 L298.3 194.6 L301.1 183.3 L302.9 171.8 L303.6 160.1 L303.2 148.3 L301.5 136.6 L298.7 125.0 L294.7 113.7 L289.4 102.8 L282.9 92.3 L275.2 82.5 L266.4 73.5 L256.5 65.3 L245.5 58.1 L233.7 52.1 L221.0 47.3 L207.6 43.8 L193.7 41.8 L179.5 41.2 M179.5 292.5 L190.3 289.3 L200.7 285.3 L210.9 280.5 L220.6 274.9 L229.9 268.5 L238.7 261.4 L247.0 253.8 L254.7 245.5 L261.8 236.7 L268.1 227.3 L273.8 217.6 L278.7 207.5 L282.9 197.0 L286.2 186.2 L288.6 175.3 L290.2 164.2 L290.7 153.0 L290.4 141.9 L289.0 130.8 L286.5 119.9 L283.1 109.2 L278.5 99.0 L272.9 89.2 L266.3 79.9 L258.5 71.4 L249.8 63.7 L240.1 57.0 L229.4 51.3 L217.9 46.8 L205.7 43.5 L192.8 41.6 L179.5 41.2 M179.5 292.5 L189.1 288.2 L198.4 283.0 L207.4 277.2 L215.9 270.6 L224.0 263.4 L231.6 255.7 L238.7 247.4 L245.2 238.7 L251.2 229.6 L256.5 220.0 L261.3 210.2 L265.4 200.1 L268.8 189.7 L271.6 179.2 L273.6 168.5 L274.8 157.8 L275.3 147.1 L275.0 136.4 L273.9 125.9 L271.9 115.5 L269.0 105.5 L265.2 95.7 L260.5 86.5 L255.0 77.8 L248.4 69.7 L241.0 62.4 L232.7 56.0 L223.5 50.6 L213.5 46.3 L202.8 43.2 L191.4 41.5 L179.5 41.2 M179.5 292.5 L187.7 287.1 L195.5 281.1 L203.0 274.3 L210.0 267.0 L216.7 259.2 L222.9 250.9 L228.7 242.2 L234.0 233.1 L238.8 223.7 L243.1 214.0 L246.9 204.1 L250.2 194.0 L252.9 183.8 L255.1 173.5 L256.7 163.1 L257.7 152.7 L258.0 142.3 L257.8 132.1 L256.9 121.9 L255.3 112.0 L253.0 102.4 L250.0 93.1 L246.3 84.3 L241.8 76.0 L236.6 68.3 L230.6 61.3 L223.8 55.1 L216.3 50.0 L208.1 45.9 L199.2 42.9 L189.6 41.3 L179.5 41.2 M179.5 292.5 L185.9 286.3 L192.0 279.5 L197.8 272.1 L203.2 264.1 L208.3 255.8 L213.0 247.1 L217.4 238.0 L221.4 228.7 L225.1 219.1 L228.3 209.3 L231.1 199.4 L233.6 189.4 L235.6 179.2 L237.2 169.1 L238.4 158.9 L239.1 148.7 L239.4 138.6 L239.2 128.7 L238.6 118.9 L237.4 109.3 L235.7 100.0 L233.5 91.1 L230.7 82.6 L227.3 74.5 L223.4 67.1 L218.9 60.4 L213.7 54.5 L208.0 49.5 L201.7 45.5 L194.8 42.7 L187.4 41.2 L179.5 41.2 M179.5 292.5 L183.9 285.7 L188.1 278.3 L192.0 270.4 L195.7 262.1 L199.1 253.4 L202.3 244.3 L205.3 235.0 L208.0 225.5 L210.4 215.8 L212.5 206.0 L214.4 196.1 L216.0 186.1 L217.4 176.0 L218.5 165.9 L219.2 155.9 L219.7 145.9 L219.9 136.1 L219.8 126.3 L219.3 116.7 L218.6 107.4 L217.5 98.4 L216.0 89.6 L214.1 81.3 L211.9 73.5 L209.3 66.3 L206.2 59.8 L202.8 54.0 L198.9 49.1 L194.7 45.3 L190.0 42.6 L184.9 41.2 L179.5 41.2 M179.5 292.5 L181.7 285.3 L183.9 277.6 L185.8 269.4 L187.7 260.8 L189.4 251.9 L191.1 242.7 L192.5 233.2 L193.9 223.6 L195.1 213.9 L196.2 204.0 L197.1 194.1 L197.9 184.1 L198.6 174.1 L199.1 164.1 L199.5 154.1 L199.7 144.3 L199.8 134.5 L199.8 124.9 L199.6 115.5 L199.2 106.3 L198.6 97.4 L197.9 88.8 L197.0 80.6 L195.8 72.9 L194.5 65.8 L193.0 59.4 L191.3 53.7 L189.4 48.9 L187.2 45.1 L184.8 42.5 L182.3 41.1 L179.5 41.2 M179.5 292.5 L179.5 285.2 L179.5 277.3 L179.5 269.0 L179.5 260.4 L179.5 251.4 L179.5 242.1 L179.5 232.6 L179.5 223.0 L179.5 213.2 L179.5 203.4 L179.5 193.4 L179.5 183.4 L179.5 173.4 L179.5 163.5 L179.5 153.6 L179.5 143.7 L179.5 134.0 L179.5 124.4 L179.5 115.0 L179.5 105.9 L179.5 97.0 L179.5 88.5 L179.5 80.4 L179.5 72.7 L179.5 65.7 L179.5 59.3 L179.5 53.6 L179.5 48.9 L179.5 45.1 L179.5 42.5 L179.5 41.1 L179.5 41.2 M179.5 292.5 L177.3 285.3 L175.1 277.6 L173.2 269.4 L171.3 260.8 L169.6 251.9 L167.9 242.7 L166.5 233.2 L165.1 223.6 L163.9 213.9 L162.8 204.0 L161.9 194.1 L161.1 184.1 L160.4 174.1 L159.9 164.1 L159.5 154.1 L159.3 144.3 L159.2 134.5 L159.2 124.9 L159.4 115.5 L159.8 106.3 L160.4 97.4 L161.1 88.8 L162.0 80.6 L163.2 72.9 L164.5 65.8 L166.0 59.4 L167.7 53.7 L169.6 48.9 L171.8 45.1 L174.2 42.5 L176.7 41.1 L179.5 41.2 M179.5 292.5 L175.1 285.7 L170.9 278.3 L167.0 270.4 L163.3 262.1 L159.9 253.4 L156.7 244.3 L153.7 235.0 L151.0 225.5 L148.6 215.8 L146.5 206.0 L144.6 196.1 L143.0 186.1 L141.6 176.0 L140.5 165.9 L139.8 155.9 L139.3 145.9 L139.1 136.1 L139.2 126.3 L139.7 116.7 L140.4 107.4 L141.5 98.4 L143.0 89.6 L144.9 81.3 L147.1 73.5 L149.7 66.3 L152.8 59.8 L156.2 54.0 L160.1 49.1 L164.3 45.3 L169.0 42.6 L174.1 41.2 L179.5 41.2 M179.5 292.5 L173.1 286.3 L167.0 279.5 L161.2 272.1 L155.8 264.1 L150.7 255.8 L146.0 247.1 L141.6 238.0 L137.6 228.7 L133.9 219.1 L130.7 209.3 L127.9 199.4 L125.4 189.4 L123.4 179.2 L121.8 169.1 L120.6 158.9 L119.9 148.7 L119.6 138.6 L119.8 128.7 L120.4 118.9 L121.6 109.3 L123.3 100.0 L125.5 91.1 L128.3 82.6 L131.7 74.5 L135.6 67.1 L140.1 60.4 L145.3 54.5 L151.0 49.5 L157.3 45.5 L164.2 42.7 L171.6 41.2 L179.5 41.2 M179.5 292.5 L171.3 287.1 L163.5 281.1 L156.0 274.3 L149.0 267.0 L142.3 259.2 L136.1 250.9 L130.3 242.2 L125.0 233.1 L120.2 223.7 L115.9 214.0 L112.1 204.1 L108.8 194.0 L106.1 183.8 L103.9 173.5 L102.3 163.1 L101.3 152.7 L101.0 142.3 L101.2 132.1 L102.1 121.9 L103.7 112.0 L106.0 102.4 L109.0 93.1 L112.7 84.3 L117.2 76.0 L122.4 68.3 L128.4 61.3 L135.2 55.1 L142.7 50.0 L150.9 45.9 L159.8 42.9 L169.4 41.3 L179.5 41.2 M179.5 292.5 L169.9 288.2 L160.6 283.0 L151.6 277.2 L143.1 270.6 L135.0 263.4 L127.4 255.7 L120.3 247.4 L113.8 238.7 L107.8 229.6 L102.5 220.0 L97.7 210.2 L93.6 200.1 L90.2 189.7 L87.4 179.2 L85.4 168.5 L84.2 157.8 L83.7 147.1 L84.0 136.4 L85.1 125.9 L87.1 115.5 L90.0 105.5 L93.8 95.7 L98.5 86.5 L104.0 77.8 L110.6 69.7 L118.0 62.4 L126.3 56.0 L135.5 50.6 L145.5 46.3 L156.2 43.2 L167.6 41.5 L179.5 41.2 M179.5 292.5 L168.7 289.3 L158.3 285.3 L148.1 280.5 L138.4 274.9 L129.1 268.5 L120.3 261.4 L112.0 253.8 L104.3 245.5 L97.2 236.7 L90.9 227.3 L85.2 217.6 L80.3 207.5 L76.1 197.0 L72.8 186.2 L70.4 175.3 L68.8 164.2 L68.3 153.0 L68.6 141.9 L70.0 130.8 L72.5 119.9 L75.9 109.2 L80.5 99.0 L86.1 89.2 L92.7 79.9 L100.5 71.4 L109.2 63.7 L118.9 57.0 L129.6 51.3 L141.1 46.8 L153.3 43.5 L166.2 41.6 L179.5 41.2 M179.5 292.5 L168.0 290.6 L156.8 287.9 L145.7 284.2 L135.0 279.6 L124.8 274.2 L114.9 268.0 L105.7 261.0 L97.0 253.3 L88.9 244.9 L81.6 235.9 L75.1 226.3 L69.4 216.2 L64.6 205.6 L60.7 194.6 L57.9 183.3 L56.1 171.8 L55.4 160.1 L55.8 148.3 L57.5 136.6 L60.3 125.0 L64.3 113.7 L69.6 102.8 L76.1 92.3 L83.8 82.5 L92.6 73.5 L102.5 65.3 L113.5 58.1 L125.3 52.1 L138.0 47.3 L151.4 43.8 L165.3 41.8 L179.5 41.2 M179.5 292.5 L167.7 292.0 L156.1 290.5 L144.6 288.1 L133.3 284.7 L122.4 280.4 L111.8 275.2 L101.8 269.0 L92.3 262.0 L83.4 254.2 L75.3 245.5 L68.0 236.2 L61.7 226.1 L56.3 215.4 L51.9 204.2 L48.7 192.5 L46.6 180.5 L45.9 168.2 L46.4 155.8 L48.2 143.3 L51.4 130.9 L56.0 118.8 L61.9 107.1 L69.2 95.9 L77.7 85.4 L87.5 75.7 L98.3 67.0 L110.2 59.4 L123.0 53.0 L136.4 47.9 L150.5 44.2 L164.9 41.9 L179.5 41.2 M179.5 292.5 L167.9 293.4 L156.3 293.3 L144.7 292.2 L133.3 290.1 L122.1 286.9 L111.2 282.8 L100.7 277.6 L90.7 271.4 L81.3 264.2 L72.7 256.1 L64.8 247.0 L57.9 237.1 L52.0 226.4 L47.3 214.9 L43.7 202.9 L41.5 190.3 L40.6 177.3 L41.2 164.1 L43.2 150.8 L46.7 137.5 L51.7 124.5 L58.2 111.9 L66.1 99.8 L75.2 88.5 L85.6 78.1 L97.1 68.8 L109.5 60.7 L122.7 53.9 L136.5 48.5 L150.7 44.5 L165.1 42.1 L179.5 41.2 M179.5 292.5 L168.5 294.7 L157.4 295.9 L146.3 296.2 L135.1 295.4 L124.1 293.5 L113.3 290.5 L102.8 286.4 L92.7 281.1 L83.1 274.7 L74.2 267.2 L66.1 258.5 L58.9 248.8 L52.8 238.1 L47.8 226.4 L44.1 214.0 L41.7 200.8 L40.8 187.1 L41.4 173.1 L43.5 158.8 L47.2 144.6 L52.5 130.6 L59.2 116.9 L67.4 104.0 L76.9 91.8 L87.5 80.7 L99.2 70.7 L111.6 62.1 L124.7 54.8 L138.3 49.1 L152.0 44.9 L165.8 42.3 L179.5 41.2 M179.5 292.5 L169.6 295.9 L159.5 298.5 L149.2 300.0 L138.8 300.5 L128.5 299.9 L118.3 298.1 L108.2 295.0 L98.5 290.8 L89.3 285.2 L80.6 278.3 L72.6 270.1 L65.5 260.7 L59.3 250.0 L54.3 238.3 L50.6 225.4 L48.2 211.7 L47.3 197.3 L47.9 182.4 L50.0 167.1 L53.8 151.9 L59.0 136.8 L65.8 122.1 L73.9 108.2 L83.2 95.1 L93.5 83.2 L104.8 72.6 L116.7 63.4 L129.1 55.7 L141.8 49.7 L154.5 45.2 L167.1 42.4 L179.5 41.2 M179.5 292.5 L171.0 297.0 L162.3 300.7 L153.4 303.4 L144.4 305.1 L135.2 305.7 L126.1 305.0 L117.2 303.1 L108.4 299.8 L99.9 295.1 L92.0 288.9 L84.6 281.3 L78.0 272.2 L72.3 261.7 L67.6 249.8 L64.0 236.6 L61.8 222.4 L60.9 207.3 L61.5 191.5 L63.5 175.3 L67.0 159.0 L72.0 142.8 L78.3 127.1 L85.8 112.2 L94.4 98.3 L103.8 85.6 L114.0 74.3 L124.7 64.6 L135.8 56.5 L146.9 50.2 L158.0 45.5 L168.9 42.5 L179.5 41.2 M179.5 292.5 L172.8 297.9 L165.9 302.6 L158.8 306.3 L151.5 309.0 L144.1 310.6 L136.7 311.0 L129.3 310.0 L122.1 307.7 L115.1 303.8 L108.4 298.3 L102.2 291.2 L96.6 282.5 L91.7 272.1 L87.7 260.2 L84.6 246.8 L82.7 232.1 L81.9 216.3 L82.4 199.7 L84.2 182.6 L87.2 165.4 L91.4 148.2 L96.8 131.6 L103.2 115.8 L110.4 101.0 L118.3 87.7 L126.8 75.8 L135.6 65.7 L144.6 57.2 L153.6 50.6 L162.5 45.8 L171.2 42.7 L179.5 41.2 M179.5 292.5 L174.9 298.6 L170.1 304.0 L165.1 308.5 L160.0 312.0 L154.8 314.4 L149.6 315.6 L144.3 315.4 L139.1 313.8 L134.1 310.6 L129.2 305.7 L124.7 299.1 L120.6 290.7 L117.0 280.4 L114.1 268.5 L111.9 254.9 L110.4 239.9 L109.9 223.6 L110.2 206.4 L111.5 188.6 L113.8 170.5 L116.9 152.6 L120.8 135.2 L125.4 118.6 L130.7 103.2 L136.4 89.3 L142.5 77.0 L148.8 66.5 L155.1 57.8 L161.5 51.0 L167.7 46.0 L173.7 42.7 L179.5 41.2 M179.5 292.5 L177.1 299.0 L174.7 304.9 L172.1 309.8 L169.5 313.9 L166.8 316.8 L164.1 318.5 L161.4 318.9 L158.6 317.7 L156.0 315.0 L153.5 310.5 L151.1 304.1 L148.9 295.9 L147.0 285.8 L145.4 273.9 L144.3 260.2 L143.5 244.9 L143.2 228.3 L143.4 210.7 L144.1 192.4 L145.3 173.8 L146.9 155.4 L149.0 137.5 L151.5 120.4 L154.2 104.6 L157.2 90.3 L160.4 77.7 L163.7 67.0 L167.0 58.1 L170.3 51.2 L173.5 46.1 L176.6 42.8 L179.5 41.2"/>
<path stroke="#0000ff" d="M179.5 300.5 L179.5 385.1"/>
<path stroke="#ff0000" d="M179.5 300.5 L179.5 403.2"/>
<path stroke="#22ee22" d="M179.5 180.5 L-87.3 180.5"/>
</g>
<path clip-path="url(#cp2)" fill="#1616c0" d="M303 207h2v2h-2zM291 195h2v2h-2zM50 231h2v2h-2zM269 267h2v2h-2zM119 173h2v2h-2zM61 203h2v2h-2zM309 231h2v2h-2zM237 277h2v2h-2zM299 203h2v2h-2zM88 184h2v2h-2zM141 170h2v2h-2zM221 170h2v2h-2zM227 171h2v2h-2zM101 179h2v2h-2zM145 277h2v2h-2zM76 189h2v2h-2zM245 177h2v2h-2zM310 230h2v2h-2zM270 183h2v2h-2zM173 167h2v2h-2zM51 217h2v2h-2zM283 190h2v2h-2zM198 168h2v2h-2zM71 191h2v2h-2zM278 261h2v2h-2zM310 228h2v2h-2zM77 257h2v2h-2zM77 190h2v2h-2zM59 244h2v2h-2zM95 181h2v2h-2zM237 173h2v2h-2zM170 168h2v2h-2zM123 173h2v2h-2zM64 249h2v2h-2zM218 171h2v2h-2zM81 261h2v2h-2zM112 175h2v2h-2zM52 240h2v2h-2zM181 168h2v2h-2zM72 194h2v2h-2zM166 168h2v2h-2zM310 221h2v2h-2zM275 262h2v2h-2zM207 169h2v2h-2zM55 240h2v2h-2zM249 176h2v2h-2zM152 279h2v2h-2zM124 173h2v2h-2zM51 215h2v2h-2zM236 172h2v2h-2zM312 229h2v2h-2zM308 238h2v2h-2zM310 237h2v2h-2zM116 174h2v2h-2zM284 258h2v2h-2zM202 280h2v2h-2zM274 267h2v2h-2zM211 170h2v2h-2zM187 167h2v2h-2zM108 177h2v2h-2zM177 168h2v2h-2zM54 209h2v2h-2zM134 172h2v2h-2zM109 177h2v2h-2zM176 166h2v2h-2zM311 218h2v2h-2zM74 191h2v2h-2zM146 168h2v2h-2zM225 277h2v2h-2zM293 194h2v2h-2zM106 272h2v2h-2zM50 219h2v2h-2zM194 280h2v2h-2zM293 196h2v2h-2zM191 280h2v2h-2zM282 263h2v2h-2zM240 276h2v2h-2zM161 280h2v2h-2zM213 169h2v2h-2zM282 191h2v2h-2zM247 175h2v2h-2zM259 179h2v2h-2zM165 167h2v2h-2zM188 281h2v2h-2zM312 223h2v2h-2zM217 169h2v2h-2zM111 175h2v2h-2zM296 198h2v2h-2zM93 266h2v2h-2zM140 279h2v2h-2zM311 224h2v2h-2zM141 169h2v2h-2zM51 216h2v2h-2zM245 274h2v2h-2zM309 234h2v2h-2zM207 168h2v2h-2zM83 187h2v2h-2zM67 251h2v2h-2zM50 226h2v2h-2zM236 278h2v2h-2zM155 279h2v2h-2zM110 174h2v2h-2zM264 266h2v2h-2zM304 209h2v2h-2zM107 177h2v2h-2zM250 176h2v2h-2zM213 168h2v2h-2zM50 228h2v2h-2zM53 235h2v2h-2zM151 169h2v2h-2zM48 224h2v2h-2zM237 174h2v2h-2zM153 279h2v2h-2zM116 175h2v2h-2zM146 278h2v2h-2zM227 277h2v2h-2zM75 258h2v2h-2zM144 169h2v2h-2zM64 198h2v2h-2zM150 168h2v2h-2zM294 196h2v2h-2zM184 280h2v2h-2zM90 265h2v2h-2zM81 185h2v2h-2zM310 225h2v2h-2zM304 206h2v2h-2zM201 169h2v2h-2zM51 235h2v2h-2zM286 258h2v2h-2zM146 278h2v2h-2zM122 275h2v2h-2zM97 180h2v2h-2zM72 194h2v2h-2zM264 269h2v2h-2zM198 168h2v2h-2zM126 171h2v2h-2zM105 177h2v2h-2zM72 192h2v2h-2zM79 261h2v2h-2zM307 212h2v2h-2zM246 176h2v2h-2zM138 171h2v2h-2zM139 276h2v2h-2zM66 195h2v2h-2zM302 201h2v2h-2zM304 206h2v2h-2zM227 173h2v2h-2zM293 196h2v2h-2zM92 181h2v2h-2zM129 279h2v2h-2zM303 244h2v2h-2zM169 168h2v2h-2zM78 186h2v2h-2zM184 167h2v2h-2zM95 267h2v2h-2zM57 205h2v2h-2zM74 257h2v2h-2zM284 260h2v2h-2zM311 227h2v2h-2zM52 237h2v2h-2zM140 277h2v2h-2zM195 282h2v2h-2zM50 221h2v2h-2zM300 203h2v2h-2zM64 196h2v2h-2zM308 215h2v2h-2zM257 271h2v2h-2zM55 207h2v2h-2zM225 279h2v2h-2zM70 192h2v2h-2zM295 200h2v2h-2zM188 168h2v2h-2zM79 261h2v2h-2zM308 212h2v2h-2zM200 167h2v2h-2zM266 181h2v2h-2zM196 167h2v2h-2zM309 233h2v2h-2zM48 225h2v2h-2zM111 176h2v2h-2zM296 199h2v2h-2zM82 187h2v2h-2zM58 204h2v2h-2zM303 204h2v2h-2zM193 281h2v2h-2zM306 237h2v2h-2zM221 170h2v2h-2zM120 173h2v2h-2zM168 279h2v2h-2zM167 283h2v2h-2zM120 175h2v2h-2zM219 170h2v2h-2zM310 215h2v2h-2zM246 273h2v2h-2zM306 238h2v2h-2zM263 180h2v2h-2zM266 267h2v2h-2zM301 242h2v2h-2zM227 276h2v2h-2zM106 177h2v2h-2zM184 168h2v2h-2zM308 210h2v2h-2zM164 168h2v2h-2zM226 172h2v2h-2zM88 184h2v2h-2zM111 273h2v2h-2zM266 182h2v2h-2zM95 181h2v2h-2zM310 220h2v2h-2zM118 274h2v2h-2zM109 177h2v2h-2zM305 242h2v2h-2zM303 207h2v2h-2zM305 244h2v2h-2zM310 235h2v2h-2zM288 192h2v2h-2zM52 234h2v2h-2zM206 169h2v2h-2zM299 201h2v2h-2zM229 173h2v2h-2zM57 205h2v2h-2zM281 189h2v2h-2zM309 234h2v2h-2zM57 206h2v2h-2zM291 195h2v2h-2zM89 183h2v2h-2zM280 188h2v2h-2zM50 216h2v2h-2zM56 242h2v2h-2zM269 183h2v2h-2zM57 245h2v2h-2zM166 168h2v2h-2zM217 171h2v2h-2zM290 193h2v2h-2zM223 171h2v2h-2zM215 169h2v2h-2zM67 196h2v2h-2zM269 184h2v2h-2zM185 167h2v2h-2zM250 270h2v2h-2zM287 192h2v2h-2zM62 202h2v2h-2zM279 263h2v2h-2zM203 169h2v2h-2zM309 214h2v2h-2zM305 242h2v2h-2zM289 254h2v2h-2zM51 231h2v2h-2zM252 177h2v2h-2zM245 175h2v2h-2zM61 201h2v2h-2zM117 175h2v2h-2zM98 269h2v2h-2zM100 270h2v2h-2zM191 169h2v2h-2zM152 168h2v2h-2zM286 191h2v2h-2zM209 170h2v2h-2zM62 200h2v2h-2zM147 169h2v2h-2zM102 179h2v2h-2zM188 167h2v2h-2zM131 277h2v2h-2zM293 255h2v2h-2zM51 232h2v2h-2zM99 267h2v2h-2zM50 233h2v2h-2zM270 184h2v2h-2zM259 179h2v2h-2zM307 212h2v2h-2zM237 274h2v2h-2zM59 243h2v2h-2zM86 184h2v2h-2zM59 243h2v2h-2zM88 183h2v2h-2zM311 218h2v2h-2zM50 227h2v2h-2zM79 261h2v2h-2zM281 187h2v2h-2zM269 265h2v2h-2zM59 203h2v2h-2zM280 259h2v2h-2zM68 252h2v2h-2zM233 173h2v2h-2zM49 220h2v2h-2zM153 168h2v2h-2zM79 188h2v2h-2zM115 175h2v2h-2zM289 192h2v2h-2zM260 178h2v2h-2zM310 233h2v2h-2zM51 220h2v2h-2zM64 198h2v2h-2zM208 169h2v2h-2zM200 167h2v2h-2zM286 191h2v2h-2zM70 255h2v2h-2zM311 228h2v2h-2zM49 229h2v2h-2zM110 176h2v2h-2zM93 181h2v2h-2zM76 188h2v2h-2zM55 208h2v2h-2zM73 255h2v2h-2zM102 269h2v2h-2zM304 208h2v2h-2zM84 262h2v2h-2zM311 225h2v2h-2zM311 219h2v2h-2zM50 229h2v2h-2zM57 243h2v2h-2zM170 169h2v2h-2zM254 178h2v2h-2zM57 204h2v2h-2zM103 178h2v2h-2zM192 283h2v2h-2zM311 227h2v2h-2zM195 281h2v2h-2zM90 266h2v2h-2zM308 212h2v2h-2zM130 172h2v2h-2zM311 226h2v2h-2zM151 168h2v2h-2zM128 273h2v2h-2zM308 211h2v2h-2zM98 268h2v2h-2zM241 174h2v2h-2zM166 168h2v2h-2zM280 188h2v2h-2zM180 282h2v2h-2zM287 193h2v2h-2zM57 204h2v2h-2zM108 177h2v2h-2zM74 189h2v2h-2zM278 261h2v2h-2zM157 170h2v2h-2zM177 280h2v2h-2zM141 170h2v2h-2zM310 229h2v2h-2zM53 207h2v2h-2zM207 277h2v2h-2zM89 184h2v2h-2zM74 255h2v2h-2zM218 170h2v2h-2zM302 207h2v2h-2zM299 203h2v2h-2zM196 167h2v2h-2zM209 169h2v2h-2zM301 248h2v2h-2zM104 270h2v2h-2zM93 181h2v2h-2zM309 229h2v2h-2zM53 237h2v2h-2zM257 179h2v2h-2zM303 206h2v2h-2zM206 279h2v2h-2zM79 188h2v2h-2zM137 169h2v2h-2zM56 243h2v2h-2zM306 240h2v2h-2zM54 208h2v2h-2zM53 237h2v2h-2zM52 236h2v2h-2zM56 208h2v2h-2zM215 169h2v2h-2zM231 275h2v2h-2zM95 180h2v2h-2zM208 277h2v2h-2zM264 268h2v2h-2zM236 173h2v2h-2zM289 257h2v2h-2zM210 169h2v2h-2zM307 235h2v2h-2zM220 279h2v2h-2zM227 172h2v2h-2zM66 195h2v2h-2zM58 202h2v2h-2zM297 202h2v2h-2zM49 229h2v2h-2zM256 180h2v2h-2zM311 226h2v2h-2zM169 168h2v2h-2zM112 176h2v2h-2zM55 243h2v2h-2zM85 185h2v2h-2zM262 268h2v2h-2zM134 172h2v2h-2zM271 184h2v2h-2zM67 193h2v2h-2zM228 276h2v2h-2zM88 183h2v2h-2zM50 224h2v2h-2zM223 278h2v2h-2zM80 260h2v2h-2zM81 263h2v2h-2zM308 236h2v2h-2zM237 173h2v2h-2zM168 168h2v2h-2zM198 169h2v2h-2zM74 258h2v2h-2zM113 174h2v2h-2zM107 176h2v2h-2zM170 167h2v2h-2zM196 167h2v2h-2zM136 168h2v2h-2zM51 215h2v2h-2zM296 249h2v2h-2zM66 196h2v2h-2zM154 168h2v2h-2zM281 190h2v2h-2zM295 199h2v2h-2zM72 191h2v2h-2zM150 278h2v2h-2zM272 264h2v2h-2zM219 171h2v2h-2zM81 186h2v2h-2zM299 201h2v2h-2zM297 245h2v2h-2zM207 169h2v2h-2zM92 268h2v2h-2zM311 223h2v2h-2zM135 170h2v2h-2zM223 171h2v2h-2zM230 173h2v2h-2zM299 249h2v2h-2zM52 236h2v2h-2zM193 169h2v2h-2zM213 277h2v2h-2zM206 168h2v2h-2zM258 179h2v2h-2zM55 242h2v2h-2zM73 192h2v2h-2zM167 168h2v2h-2zM77 189h2v2h-2zM48 218h2v2h-2zM145 280h2v2h-2zM124 174h2v2h-2zM285 190h2v2h-2zM50 226h2v2h-2zM51 231h2v2h-2zM100 179h2v2h-2zM189 169h2v2h-2zM61 245h2v2h-2zM71 192h2v2h-2zM307 212h2v2h-2zM126 174h2v2h-2zM89 182h2v2h-2zM299 247h2v2h-2zM311 221h2v2h-2zM183 279h2v2h-2zM118 275h2v2h-2zM309 238h2v2h-2zM54 238h2v2h-2zM173 167h2v2h-2zM310 223h2v2h-2zM306 206h2v2h-2zM258 180h2v2h-2zM298 250h2v2h-2zM125 275h2v2h-2zM171 167h2v2h-2zM248 272h2v2h-2zM81 187h2v2h-2zM216 168h2v2h-2zM301 247h2v2h-2zM72 192h2v2h-2zM273 264h2v2h-2zM117 274h2v2h-2zM53 210h2v2h-2zM65 198h2v2h-2zM50 214h2v2h-2zM66 251h2v2h-2zM199 168h2v2h-2zM50 229h2v2h-2zM69 192h2v2h-2zM311 223h2v2h-2zM282 263h2v2h-2zM79 261h2v2h-2zM283 260h2v2h-2zM125 173h2v2h-2zM311 227h2v2h-2zM86 185h2v2h-2zM52 210h2v2h-2zM298 199h2v2h-2zM50 218h2v2h-2zM83 186h2v2h-2zM270 184h2v2h-2zM182 167h2v2h-2zM306 211h2v2h-2zM122 173h2v2h-2zM211 170h2v2h-2zM88 182h2v2h-2zM118 174h2v2h-2zM283 260h2v2h-2zM51 236h2v2h-2zM108 178h2v2h-2zM126 276h2v2h-2zM159 169h2v2h-2zM51 214h2v2h-2zM276 262h2v2h-2zM49 221h2v2h-2zM81 188h2v2h-2zM125 274h2v2h-2zM288 194h2v2h-2zM183 167h2v2h-2zM48 220h2v2h-2zM114 175h2v2h-2zM57 243h2v2h-2zM243 175h2v2h-2zM56 243h2v2h-2zM64 249h2v2h-2zM87 265h2v2h-2zM242 174h2v2h-2zM91 267h2v2h-2zM287 191h2v2h-2zM122 173h2v2h-2zM159 280h2v2h-2zM94 180h2v2h-2zM123 171h2v2h-2zM262 181h2v2h-2zM171 167h2v2h-2zM186 168h2v2h-2zM79 189h2v2h-2zM155 169h2v2h-2zM283 189h2v2h-2zM310 229h2v2h-2zM109 177h2v2h-2zM307 238h2v2h-2zM274 184h2v2h-2zM92 182h2v2h-2zM307 213h2v2h-2zM82 261h2v2h-2zM155 168h2v2h-2zM77 188h2v2h-2zM85 185h2v2h-2zM110 273h2v2h-2zM297 247h2v2h-2zM136 170h2v2h-2zM162 168h2v2h-2zM286 193h2v2h-2zM255 176h2v2h-2zM303 205h2v2h-2zM101 179h2v2h-2zM224 171h2v2h-2zM276 264h2v2h-2zM310 217h2v2h-2zM302 246h2v2h-2zM103 178h2v2h-2zM147 169h2v2h-2zM244 175h2v2h-2zM151 169h2v2h-2zM103 178h2v2h-2zM310 222h2v2h-2zM239 277h2v2h-2zM140 278h2v2h-2zM307 213h2v2h-2zM67 196h2v2h-2zM239 175h2v2h-2zM61 248h2v2h-2zM305 210h2v2h-2zM112 176h2v2h-2zM54 238h2v2h-2zM276 262h2v2h-2zM231 172h2v2h-2zM124 172h2v2h-2zM151 169h2v2h-2zM158 168h2v2h-2zM309 222h2v2h-2zM241 175h2v2h-2zM140 172h2v2h-2zM293 195h2v2h-2zM110 176h2v2h-2zM292 196h2v2h-2zM271 264h2v2h-2zM72 253h2v2h-2zM281 260h2v2h-2zM97 181h2v2h-2zM230 170h2v2h-2zM49 216h2v2h-2zM174 168h2v2h-2zM310 216h2v2h-2zM311 223h2v2h-2zM309 216h2v2h-2zM307 215h2v2h-2zM305 209h2v2h-2zM290 193h2v2h-2zM121 174h2v2h-2zM163 168h2v2h-2zM250 273h2v2h-2zM229 171h2v2h-2zM109 270h2v2h-2zM281 190h2v2h-2zM294 198h2v2h-2zM292 255h2v2h-2zM304 205h2v2h-2zM105 270h2v2h-2zM210 168h2v2h-2zM69 193h2v2h-2zM69 193h2v2h-2zM58 202h2v2h-2zM124 172h2v2h-2zM295 251h2v2h-2zM75 191h2v2h-2zM82 185h2v2h-2zM304 242h2v2h-2zM308 229h2v2h-2zM98 180h2v2h-2zM250 176h2v2h-2zM50 230h2v2h-2zM298 200h2v2h-2zM84 186h2v2h-2zM112 177h2v2h-2zM281 261h2v2h-2zM298 201h2v2h-2zM290 193h2v2h-2zM268 265h2v2h-2zM309 216h2v2h-2zM157 168h2v2h-2zM310 218h2v2h-2zM100 179h2v2h-2zM232 173h2v2h-2zM207 168h2v2h-2zM310 226h2v2h-2zM258 272h2v2h-2zM125 172h2v2h-2zM122 277h2v2h-2zM150 169h2v2h-2zM266 183h2v2h-2zM257 179h2v2h-2zM167 167h2v2h-2zM243 177h2v2h-2zM302 245h2v2h-2zM231 172h2v2h-2zM210 170h2v2h-2zM49 228h2v2h-2zM208 169h2v2h-2zM294 250h2v2h-2zM184 168h2v2h-2zM295 253h2v2h-2zM163 168h2v2h-2zM265 267h2v2h-2zM78 188h2v2h-2zM57 205h2v2h-2zM55 205h2v2h-2zM279 187h2v2h-2zM138 171h2v2h-2zM261 181h2v2h-2zM125 275h2v2h-2zM89 182h2v2h-2zM257 178h2v2h-2zM65 197h2v2h-2zM77 190h2v2h-2zM302 243h2v2h-2zM205 168h2v2h-2zM49 230h2v2h-2zM284 257h2v2h-2zM151 167h2v2h-2zM298 202h2v2h-2zM51 215h2v2h-2zM264 182h2v2h-2zM51 235h2v2h-2zM61 202h2v2h-2zM100 179h2v2h-2zM210 169h2v2h-2zM102 180h2v2h-2zM249 271h2v2h-2zM179 167h2v2h-2zM200 169h2v2h-2zM188 167h2v2h-2zM232 172h2v2h-2zM51 232h2v2h-2zM160 168h2v2h-2zM61 250h2v2h-2zM131 278h2v2h-2zM50 215h2v2h-2zM203 282h2v2h-2zM182 281h2v2h-2zM169 168h2v2h-2zM290 195h2v2h-2zM293 253h2v2h-2zM107 271h2v2h-2zM223 170h2v2h-2zM310 228h2v2h-2zM173 166h2v2h-2zM160 283h2v2h-2zM62 201h2v2h-2zM57 207h2v2h-2zM274 186h2v2h-2zM262 181h2v2h-2zM207 168h2v2h-2zM203 167h2v2h-2zM51 223h2v2h-2zM292 195h2v2h-2zM204 169h2v2h-2zM221 171h2v2h-2zM107 177h2v2h-2zM144 170h2v2h-2zM60 245h2v2h-2zM96 180h2v2h-2zM303 245h2v2h-2zM183 168h2v2h-2zM239 173h2v2h-2zM307 213h2v2h-2zM58 204h2v2h-2zM85 185h2v2h-2zM235 174h2v2h-2zM310 228h2v2h-2zM51 238h2v2h-2zM51 227h2v2h-2zM166 168h2v2h-2zM260 181h2v2h-2zM74 190h2v2h-2zM247 177h2v2h-2zM233 173h2v2h-2zM302 203h2v2h-2zM50 219h2v2h-2zM305 245h2v2h-2zM183 167h2v2h-2zM216 169h2v2h-2zM165 282h2v2h-2zM282 259h2v2h-2zM140 170h2v2h-2zM311 219h2v2h-2zM128 277h2v2h-2zM290 254h2v2h-2zM97 268h2v2h-2zM232 174h2v2h-2zM298 201h2v2h-2zM194 168h2v2h-2zM53 235h2v2h-2zM192 169h2v2h-2zM164 281h2v2h-2zM94 268h2v2h-2zM311 221h2v2h-2zM75 187h2v2h-2zM263 180h2v2h-2zM302 204h2v2h-2zM106 272h2v2h-2zM132 172h2v2h-2zM302 203h2v2h-2zM141 170h2v2h-2zM149 170h2v2h-2zM49 226h2v2h-2zM233 173h2v2h-2zM177 167h2v2h-2zM300 244h2v2h-2zM57 244h2v2h-2zM101 268h2v2h-2zM53 209h2v2h-2zM63 252h2v2h-2zM256 178h2v2h-2zM51 216h2v2h-2zM116 175h2v2h-2zM136 278h2v2h-2zM215 170h2v2h-2zM197 168h2v2h-2zM87 263h2v2h-2zM210 170h2v2h-2zM309 217h2v2h-2zM305 210h2v2h-2zM248 176h2v2h-2zM287 192h2v2h-2zM209 168h2v2h-2zM311 219h2v2h-2zM252 176h2v2h-2zM309 237h2v2h-2zM270 188h2v2h-2zM243 174h2v2h-2zM231 172h2v2h-2zM125 173h2v2h-2zM214 170h2v2h-2zM298 203h2v2h-2zM139 171h2v2h-2zM296 198h2v2h-2zM57 204h2v2h-2zM192 168h2v2h-2zM162 169h2v2h-2zM95 180h2v2h-2zM200 167h2v2h-2zM310 232h2v2h-2zM309 218h2v2h-2zM74 255h2v2h-2zM91 184h2v2h-2zM283 189h2v2h-2zM144 172h2v2h-2zM137 172h2v2h-2zM298 250h2v2h-2zM146 170h2v2h-2zM117 175h2v2h-2zM222 170h2v2h-2zM269 182h2v2h-2zM308 213h2v2h-2zM120 175h2v2h-2zM260 270h2v2h-2zM78 258h2v2h-2zM262 181h2v2h-2zM198 169h2v2h-2zM291 193h2v2h-2zM56 240h2v2h-2zM55 208h2v2h-2zM220 277h2v2h-2zM217 169h2v2h-2zM148 280h2v2h-2zM310 221h2v2h-2zM139 170h2v2h-2zM303 243h2v2h-2zM312 219h2v2h-2zM62 199h2v2h-2zM67 252h2v2h-2zM100 178h2v2h-2zM51 233h2v2h-2zM221 171h2v2h-2zM264 179h2v2h-2zM177 168h2v2h-2zM70 254h2v2h-2zM184 168h2v2h-2zM70 254h2v2h-2zM137 171h2v2h-2zM58 202h2v2h-2zM230 278h2v2h-2zM155 168h2v2h-2zM189 165h2v2h-2zM309 222h2v2h-2zM71 193h2v2h-2zM48 222h2v2h-2zM270 184h2v2h-2zM131 171h2v2h-2zM233 173h2v2h-2zM53 211h2v2h-2zM174 167h2v2h-2zM193 281h2v2h-2zM126 172h2v2h-2zM310 235h2v2h-2zM58 202h2v2h-2zM209 168h2v2h-2zM308 236h2v2h-2zM273 186h2v2h-2zM114 175h2v2h-2zM298 250h2v2h-2zM239 275h2v2h-2zM249 176h2v2h-2zM61 201h2v2h-2zM270 185h2v2h-2zM234 171h2v2h-2zM50 227h2v2h-2zM97 179h2v2h-2zM56 239h2v2h-2zM174 168h2v2h-2zM49 216h2v2h-2zM199 168h2v2h-2zM56 205h2v2h-2zM240 276h2v2h-2zM239 274h2v2h-2zM238 277h2v2h-2zM236 275h2v2h-2zM235 274h2v2h-2zM233 277h2v2h-2zM236 273h2v2h-2zM239 272h2v2h-2zM233 273h2v2h-2zM236 274h2v2h-2zM235 277h2v2h-2zM234 277h2v2h-2zM235 272h2v2h-2zM235 275h2v2h-2zM232 277h2v2h-2zM231 277h2v2h-2zM231 273h2v2h-2zM239 277h2v2h-2zM118 272h2v2h-2zM117 273h2v2h-2zM119 272h2v2h-2zM115 274h2v2h-2zM117 272h2v2h-2zM116 271h2v2h-2zM117 273h2v2h-2zM116 273h2v2h-2zM118 274h2v2h-2zM120 273h2v2h-2zM117 272h2v2h-2zM116 273h2v2h-2zM156 168h2v2h-2zM156 166h2v2h-2zM151 167h2v2h-2zM156 167h2v2h-2zM152 167h2v2h-2zM154 166h2v2h-2zM156 170h2v2h-2zM155 168h2v2h-2zM155 169h2v2h-2zM155 167h2v2h-2zM310 225h2v2h-2zM309 226h2v2h-2zM309 225h2v2h-2zM310 222h2v2h-2zM308 221h2v2h-2zM311 223h2v2h-2zM313 221h2v2h-2zM307 228h2v2h-2zM307 222h2v2h-2zM306 227h2v2h-2zM311 225h2v2h-2zM312 224h2v2h-2zM311 224h2v2h-2zM307 225h2v2h-2zM309 226h2v2h-2zM48 226h2v2h-2zM49 224h2v2h-2zM47 221h2v2h-2zM51 225h2v2h-2zM48 224h2v2h-2zM50 224h2v2h-2zM48 225h2v2h-2zM48 221h2v2h-2zM50 222h2v2h-2zM50 222h2v2h-2z"/>
</svg>
<div class="abs group" style="left:7px;top:498px;width:182px;height:95px"></div>
<div class="abs group" style="left:197px;top:489px;width:182px;height:113px"></div>
<div class="abs group" style="left:388px;top:501px;width:183px;height:89px"></div>
<div class="abs group" style="left:579px;top:501px;width:184px;height:89px"></div>
<div class="abs group" style="left:771px;top:489px;width:184px;height:113px"></div>
<div class="abs" style="left:14px;top:497px;width:47px;height:3px;background:#f0f0f0"></div>
<div class="abs" style="left:204px;top:488px;width:107px;height:3px;background:#f0f0f0"></div>
<div class="abs" style="left:395px;top:500px;width:93px;height:3px;background:#f0f0f0"></div>
<div class="abs" style="left:587px;top:500px;width:84px;height:3px;background:#f0f0f0"></div>
<div class="abs" style="left:778px;top:488px;width:83px;height:3px;background:#f0f0f0"></div>
<div class="abs combo" style="left:94px;top:517px;width:77px;height:24px"></div>
<div class="abs combo" style="left:94px;top:557px;width:77px;height:24px"></div>
<svg class="abs" style="left:157px;top:526px" width="10" height="7"><path d="M0.5 1L4.5 5L8.5 1" stroke="#333" fill="none"/></svg>
<svg class="abs" style="left:157px;top:566px" width="10" height="7"><path d="M0.5 1L4.5 5L8.5 1" stroke="#333" fill="none"/></svg>
<div class="abs btn" style="left:7px;top:621px;width:89px;height:25px"></div>
<div class="abs" style="left:106px;top:621px;width:108px;height:25px;border:2px solid #0078d7;background:#e1e1e1"></div>
<div class="abs btn" style="left:396px;top:621px;width:89px;height:25px"></div>
<div class="abs btn" style="left:495px;top:621px;width:89px;height:25px"></div>
<div class="abs btn" style="left:766px;top:621px;width:89px;height:25px"></div>
<div class="abs btn" style="left:865px;top:621px;width:89px;height:25px"></div>
<div class="t" style="left:5.86px;top:7px;transform:scaleX(0.8448)">Soft and Hard iron calibration for device ELLIPSE2-N_045007033</div>
<div class="t" style="left:6.70px;top:39px;transform:scaleX(0.8931)">Welcome to the iron calibration tool that let you compensate both soft and hard iron effects.</div>
<div class="t" style="left:9.84px;top:72px;transform:scaleX(0.8600)">Files list</div>
<div class="t" style="left:370.92px;top:72px;transform:scaleX(0.8825)">Before</div>
<div class="t" style="left:752.80px;top:72px;transform:scaleX(0.9167)">After</div>
<div class="t" style="left:15.28px;top:492px;transform:scaleX(0.9234)">Options</div>
<div class="t" style="left:23.79px;top:520px;transform:scaleX(0.9094)">Bandwidth</div>
<div class="t" style="left:23.75px;top:561px;transform:scaleX(0.9471)">Mode</div>
<div class="t" style="left:97.71px;top:521px;transform:scaleX(0.9889)">High</div>
<div class="t" style="left:97.80px;top:562px;transform:scaleX(0.9018)">2D mode</div>
<div class="t" style="left:205.88px;top:482px;transform:scaleX(0.9245)">Points information</div>
<div class="t" style="left:206.80px;top:504px;transform:scaleX(0.8803)">Acquired points: 708</div>
<div class="t" style="left:205.95px;top:529px;transform:scaleX(0.8467)">Used Points: 416</div>
<div class="t" style="left:205.94px;top:554px;transform:scaleX(0.8636)">Before Norm: 1.127</div>
<div class="t" style="left:206.80px;top:578px;transform:scaleX(0.8700)">After Norm: 1.014</div>
<div class="t" style="left:396.82px;top:495px;transform:scaleX(0.8830)">Before deviation</div>
<div class="t" style="left:396.86px;top:516px;transform:scaleX(0.8395)">Std Dev: 1%</div>
<div class="t" style="left:397.70px;top:541px;transform:scaleX(0.8375)">Average: 2%</div>
<div class="t" style="left:396.80px;top:566px;transform:scaleX(0.9000)">Maximum: 8%</div>
<div class="t" style="left:589.50px;top:495px;transform:scaleX(0.9000)">After deviation</div>
<div class="t" style="left:588.65px;top:516px;transform:scaleX(0.8474)">Std Dev: 1%</div>
<div class="t" style="left:589.50px;top:541px;transform:scaleX(0.8450)">Average: 1%</div>
<div class="t" style="left:588.60px;top:566px;transform:scaleX(0.9000)">Maximum: 5%</div>
<div class="t" style="left:780.25px;top:482px;transform:scaleX(0.8527)">Expected error</div>
<div class="t" style="left:780.27px;top:504px;transform:scaleX(0.8309);color:#f0b03c">Std Dev: 1.2°</div>
<div class="t" style="left:781.10px;top:529px;transform:scaleX(0.8476)">Average: 1.5°</div>
<div class="t" style="left:780.21px;top:554px;transform:scaleX(0.8946)">Maximum: 8.2°</div>
<div class="t" style="left:780.20px;top:578px;transform:scaleX(0.9038)">Confidence: High</div>
<div class="t" style="left:37.19px;top:626px;transform:scaleX(0.8056)">Reset</div>
<div class="t" style="left:115.01px;top:626px;transform:scaleX(0.8929)">Start acquisition</div>
<div class="t" style="left:415.42px;top:626px;transform:scaleX(0.8800)">Calibrate</div>
<div class="t" style="left:504.70px;top:626px;transform:scaleX(0.8974)">Export to file</div>
<div class="t" style="left:801.99px;top:626px;transform:scaleX(0.9059)">Ok</div>
<div class="t" style="left:890.51px;top:626px;transform:scaleX(0.8857)">Cancel</div>
<div class="abs" style="left:962px;top:0;width:1px;height:30px;background:#f6f6f6"></div>
<div class="abs" style="left:962px;top:30px;width:1px;height:625px;background:#e9e9e9"></div>
<div class="abs" style="left:0;top:654px;width:1px;height:1px;background:#000"></div>
</body></html>
